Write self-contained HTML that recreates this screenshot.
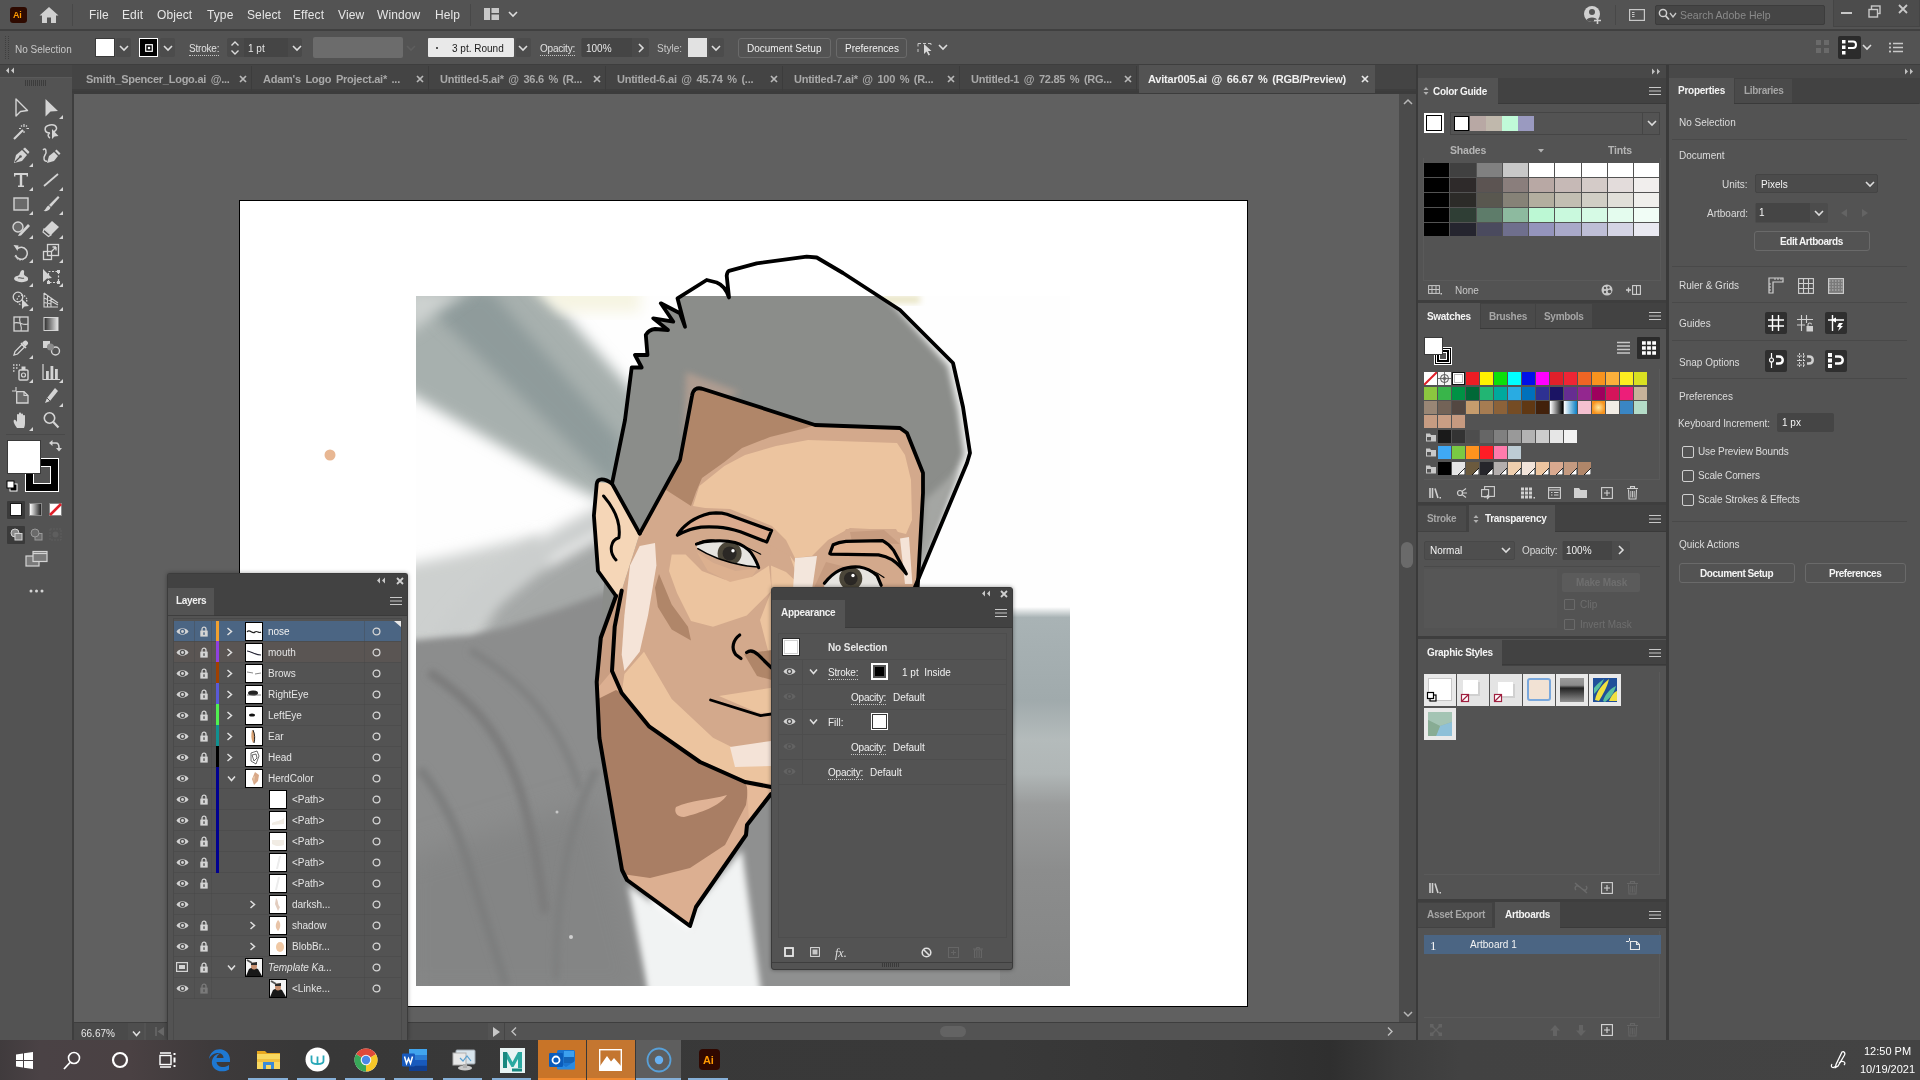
<!DOCTYPE html>
<html><head><meta charset="utf-8"><title>Illustrator</title>
<style>
*{box-sizing:border-box;margin:0;padding:0}
html,body{width:1920px;height:1080px;overflow:hidden;background:#535353;font-family:"Liberation Sans",sans-serif;font-size:11px;color:#dcdcdc}
.a{position:absolute}
.t{position:absolute;white-space:nowrap;line-height:1;will-change:transform}
#menubar{left:0;top:0;width:1920px;height:29px;background:#535353}
#ctrl{left:0;top:31px;width:1920px;height:34px;background:#535353}
#tabs{left:72px;top:65px;width:1344px;height:26px;background:#444}
#tools{left:0;top:65px;width:72px;height:975px;background:#535353}
#canvas{left:74px;top:94px;width:1325px;height:928px;background:#606060;overflow:hidden}
#status{left:74px;top:1022px;width:1342px;height:18px;background:#535353}
#vscroll{left:1399px;top:94px;width:17px;height:928px;background:#4b4b4b}
#dockA{left:1418px;top:65px;width:248px;height:975px;background:#535353}
#dockB{left:1669px;top:65px;width:251px;height:975px;background:#535353}
#taskbar{left:0;top:1040px;width:1920px;height:40px;background:#3c3c3c}
</style></head>
<body>
<div class="a" style="left:0;top:29px;width:1920px;height:2px;background:#404040"></div>
<div id="menubar" class="a"><div class="a" style="left:10px;top:7px;width:17px;height:16px;background:#2e0a00;border-radius:3px"></div><div class="t" style="left:13px;top:9px;font-size:9px;line-height:13px;color:#ff9a00;font-weight:700;letter-spacing:-.2px">Ai</div><svg class="a" style="left:39px;top:6px;" width="20" height="18" viewBox="0 0 20 18"><path d="M10,1 L19.5,9.5 L17,9.5 L17,17 L12,17 L12,11.5 L8,11.5 L8,17 L3,17 L3,9.5 L0.5,9.5 Z" fill="#d0d0d0"/></svg><div class="a" style="left:72px;top:4px;width:1px;height:22px;background:#484848;"></div><div class="t" style="left:89px;top:7px;font-size:12px;line-height:16px;color:#e6e6e6;font-weight:400;letter-spacing:.1px">File</div><div class="t" style="left:122px;top:7px;font-size:12px;line-height:16px;color:#e6e6e6;font-weight:400;letter-spacing:.1px">Edit</div><div class="t" style="left:157px;top:7px;font-size:12px;line-height:16px;color:#e6e6e6;font-weight:400;letter-spacing:.1px">Object</div><div class="t" style="left:207px;top:7px;font-size:12px;line-height:16px;color:#e6e6e6;font-weight:400;letter-spacing:.1px">Type</div><div class="t" style="left:247px;top:7px;font-size:12px;line-height:16px;color:#e6e6e6;font-weight:400;letter-spacing:.1px">Select</div><div class="t" style="left:293px;top:7px;font-size:12px;line-height:16px;color:#e6e6e6;font-weight:400;letter-spacing:.1px">Effect</div><div class="t" style="left:338px;top:7px;font-size:12px;line-height:16px;color:#e6e6e6;font-weight:400;letter-spacing:.1px">View</div><div class="t" style="left:377px;top:7px;font-size:12px;line-height:16px;color:#e6e6e6;font-weight:400;letter-spacing:.1px">Window</div><div class="t" style="left:435px;top:7px;font-size:12px;line-height:16px;color:#e6e6e6;font-weight:400;letter-spacing:.1px">Help</div><div class="a" style="left:470px;top:4px;width:1px;height:22px;background:#484848;"></div><svg class="a" style="left:484px;top:8px;" width="15" height="12" viewBox="0 0 15 12"><rect x="0" y="0" width="6" height="12" fill="#c8c8c8"/><rect x="7.5" y="0" width="7.5" height="5" fill="#c8c8c8"/><rect x="7.5" y="6.5" width="7.5" height="5.5" fill="#c8c8c8"/></svg><svg class="a" style="left:508px;top:10px;" width="10" height="8" viewBox="0 0 10 8"><path d="M1,2 L5,6 L9,2" fill="none" stroke="#dcdcdc" stroke-width="1.6"/></svg><svg class="a" style="left:1583px;top:5px;" width="20" height="20" viewBox="0 0 20 20"><circle cx="9" cy="9" r="8" fill="#d0d0d0"/><circle cx="9" cy="7" r="3" fill="#535353"/><path d="M3.5,15 C4.5,11.5 13.5,11.5 14.5,15 C12,17.5 6,17.5 3.5,15Z" fill="#535353"/><path d="M14.5,12 V19 M11,15.5 H18" stroke="#d0d0d0" stroke-width="1.6"/></svg><div class="a" style="left:1615px;top:5px;width:1px;height:20px;background:#484848;"></div><svg class="a" style="left:1629px;top:9px;" width="16" height="12" viewBox="0 0 16 12"><rect x=".6" y=".6" width="14.8" height="10.8" fill="none" stroke="#c8c8c8" stroke-width="1.2"/><path d="M3,3.5H5.5M3,5.5H5.5M3,7.5H5.5" stroke="#c8c8c8" stroke-width="1"/></svg><div class="a" style="left:1655px;top:5px;width:170px;height:20px;background:#454545;border:1px solid #3c3c3c;border-radius:2px"></div><svg class="a" style="left:1658px;top:8px;" width="12" height="13" viewBox="0 0 12 13"><circle cx="5" cy="5" r="3.6" fill="none" stroke="#d0d0d0" stroke-width="1.5"/><path d="M7.6,7.8 L11,11.5" stroke="#d0d0d0" stroke-width="1.7"/></svg><svg class="a" style="left:1669px;top:12px;" width="8" height="6" viewBox="0 0 8 6"><path d="M1,1 L4,5 L7,1" fill="none" stroke="#c8c8c8" stroke-width="1.3"/></svg><div class="t" style="left:1680px;top:8.2px;font-size:10.5px;line-height:14.5px;color:#8a8a8a;font-weight:400;">Search Adobe Help</div><div class="a" style="left:1833px;top:0px;width:87px;height:27px;background:#4c4c4c;border:1px solid #454545;border-top:none"></div><div class="a" style="left:1841px;top:12px;width:11px;height:2px;background:#c8c8c8;"></div><svg class="a" style="left:1868px;top:5px;" width="14" height="14" viewBox="0 0 14 14"><rect x="3.5" y="1" width="8.5" height="7.5" fill="none" stroke="#c8c8c8" stroke-width="1.4"/><rect x="1" y="4.5" width="8.5" height="7.5" fill="#4c4c4c" stroke="#c8c8c8" stroke-width="1.4"/></svg><svg class="a" style="left:1898px;top:4px;" width="10" height="10" viewBox="0 0 10 10"><path d="M1,1 L9,9 M9,1 L1,9" stroke="#c8c8c8" stroke-width="1.8"/></svg></div>
<div id="ctrl" class="a"><svg class="a" style="left:4px;top:5px;" width="5" height="24" viewBox="0 0 5 24"><path d="M1.5,0V24M4.5,0V24" stroke="#3e3e3e" stroke-width="1" stroke-dasharray="1 1"/></svg><div class="t" style="left:15px;top:11.5px;font-size:10px;line-height:14px;color:#c8c8c8;font-weight:400;">No Selection</div><div class="a" style="left:95px;top:7px;width:20px;height:19px;background:#fff;border:1px solid #3a3a3a"></div><div class="a" style="left:116px;top:7px;width:15px;height:19px;background:#4c4c4c;border-radius:2px"></div><svg class="a" style="left:118.5px;top:12.5px;" width="10" height="8" viewBox="0 0 10 8"><path d="M1,2 L5,6 L9,2" fill="none" stroke="#dcdcdc" stroke-width="1.6"/></svg><div class="a" style="left:139px;top:7px;width:19px;height:19px;background:#000;border:1px solid #fff"></div><svg class="a" style="left:145px;top:13px;" width="8" height="8" viewBox="0 0 8 8"><rect x=".7" y=".7" width="6.6" height="6.6" fill="none" stroke="#fff" stroke-width="1.2"/><rect x="2.8" y="2.8" width="2.4" height="2.4" fill="#fff"/></svg><div class="a" style="left:160px;top:7px;width:15px;height:19px;background:#4c4c4c;border-radius:2px"></div><svg class="a" style="left:162.5px;top:12.5px;" width="10" height="8" viewBox="0 0 10 8"><path d="M1,2 L5,6 L9,2" fill="none" stroke="#dcdcdc" stroke-width="1.6"/></svg><div class="t" style="left:189px;top:11px;font-size:10px;line-height:13px;height:14px;color:#e0e0e0;letter-spacing:-.2px;border-bottom:1px dotted #c4c4c4">Stroke:</div><div class="a" style="left:227px;top:7px;width:75px;height:19px;background:#4a4a4a;border-radius:2px"></div><svg class="a" style="left:230px;top:9px;" width="10" height="16" viewBox="0 0 10 16"><path d="M1.5,5.5 L5,2 L8.5,5.5 M1.5,10.5 L5,14 L8.5,10.5" fill="none" stroke="#dcdcdc" stroke-width="1.4"/></svg><div class="a" style="left:244px;top:7px;width:44px;height:19px;background:#454545;"></div><div class="t" style="left:248px;top:11px;font-size:10px;line-height:14px;color:#e6e6e6;font-weight:400;">1 pt</div><svg class="a" style="left:292px;top:12.5px;" width="10" height="8" viewBox="0 0 10 8"><path d="M1,2 L5,6 L9,2" fill="none" stroke="#dcdcdc" stroke-width="1.6"/></svg><div class="a" style="left:313px;top:6px;width:90px;height:21px;background:#6c6c6c;border-radius:2px"></div><svg class="a" style="left:406px;top:12.5px;" width="10" height="8" viewBox="0 0 10 8"><path d="M1,2 L5,6 L9,2" fill="none" stroke="#5e5e5e" stroke-width="1.6"/></svg><div class="a" style="left:428px;top:7px;width:86px;height:19px;background:#e9e9e9;border-radius:1px"></div><div class="a" style="left:436px;top:15.5px;width:2px;height:2px;background:#222;border-radius:1px"></div><div class="t" style="left:452px;top:11px;font-size:10px;line-height:14px;color:#1a1a1a;font-weight:400;">3 pt. Round</div><div class="a" style="left:516px;top:7px;width:15px;height:19px;background:#4c4c4c;border-radius:2px"></div><svg class="a" style="left:518px;top:12.5px;" width="10" height="8" viewBox="0 0 10 8"><path d="M1,2 L5,6 L9,2" fill="none" stroke="#dcdcdc" stroke-width="1.6"/></svg><div class="t" style="left:540px;top:11px;font-size:10px;line-height:13px;height:14px;color:#e0e0e0;letter-spacing:-.2px;border-bottom:1px dotted #c4c4c4">Opacity:</div><div class="a" style="left:581px;top:7px;width:68px;height:19px;background:#4a4a4a;border-radius:2px"></div><div class="a" style="left:582px;top:7px;width:50px;height:19px;background:#454545;"></div><div class="t" style="left:586px;top:11px;font-size:10px;line-height:14px;color:#e6e6e6;font-weight:400;">100%</div><svg class="a" style="left:637px;top:11.5px;" width="8" height="10" viewBox="0 0 8 10"><path d="M2,1 L6,5 L2,9" fill="none" stroke="#dcdcdc" stroke-width="1.6"/></svg><div class="t" style="left:657px;top:11px;font-size:10px;line-height:14px;color:#c8c8c8;font-weight:400;">Style:</div><div class="a" style="left:688px;top:7px;width:19px;height:19px;background:#e2e2e2;"></div><div class="a" style="left:709px;top:7px;width:15px;height:19px;background:#4c4c4c;border-radius:2px"></div><svg class="a" style="left:711px;top:12.5px;" width="10" height="8" viewBox="0 0 10 8"><path d="M1,2 L5,6 L9,2" fill="none" stroke="#dcdcdc" stroke-width="1.6"/></svg><div class="a" style="left:738px;top:7px;width:93px;height:20px;background:transparent;border:1px solid #6a6a6a;border-radius:3px"></div><div class="t" style="left:747px;top:11px;font-size:10px;line-height:14px;color:#f0f0f0;font-weight:400;">Document Setup</div><div class="a" style="left:836px;top:7px;width:71px;height:20px;background:transparent;border:1px solid #6a6a6a;border-radius:3px"></div><div class="t" style="left:845px;top:11px;font-size:10px;line-height:14px;color:#f0f0f0;font-weight:400;">Preferences</div><svg class="a" style="left:917px;top:9px;" width="16" height="16" viewBox="0 0 16 16"><path d="M1,3.5H4M6,3.5H9M11,3.5H14M1,3.5V6.5M1,9V12M14,3.5V5" stroke="#c8c8c8" stroke-width="1" fill="none"/><path d="M7,4 L7,14 L9.5,11.5 L11.5,15.5 L13,14.8 L11,11 L14.5,11 Z" fill="#d8d8d8"/></svg><svg class="a" style="left:938px;top:12px;" width="10" height="8" viewBox="0 0 10 8"><path d="M1,2 L5,6 L9,2" fill="none" stroke="#dcdcdc" stroke-width="1.6"/></svg><svg class="a" style="left:1816px;top:9px;" width="14" height="14" viewBox="0 0 14 14"><rect x="0" y="0" width="5" height="5" fill="#6a6a6a"/><rect x="8" y="0" width="5" height="5" fill="#6a6a6a"/><rect x="0" y="8" width="5" height="5" fill="#6a6a6a"/><rect x="8" y="8" width="5" height="5" fill="#6a6a6a"/></svg><div class="a" style="left:1838px;top:5px;width:23px;height:23px;background:#2b2b2b;border-radius:2px"></div><svg class="a" style="left:1842px;top:9px;" width="16" height="15" viewBox="0 0 16 15"><rect x="0" y="0" width="3.5" height="3.5" fill="#fff"/><rect x="0" y="5.5" width="3.5" height="3.5" fill="#fff"/><rect x="0" y="11" width="3.5" height="3.5" fill="#fff"/><path d="M6,1.5 H11 C15,1.5 15,8 11,8 H6" fill="none" stroke="#fff" stroke-width="2"/></svg><svg class="a" style="left:1862px;top:12px;" width="10" height="8" viewBox="0 0 10 8"><path d="M1,2 L5,6 L9,2" fill="none" stroke="#dcdcdc" stroke-width="1.6"/></svg><svg class="a" style="left:1889px;top:11px;" width="14" height="11" viewBox="0 0 14 11"><path d="M4,1.5H14M4,5.5H14M4,9.5H14" stroke="#c8c8c8" stroke-width="1.3"/><rect x="0" y=".7" width="2" height="1.8" fill="#c8c8c8"/><rect x="0" y="4.6" width="2" height="1.8" fill="#c8c8c8"/><rect x="0" y="8.6" width="2" height="1.8" fill="#c8c8c8"/></svg></div>
<div class="a" style="left:0;top:64px;width:1920px;height:1px;background:#3e3e3e"></div><div class="a" style="left:72px;top:91px;width:1344px;height:3px;background:#3c3c3c"></div>
<div id="tabs" class="a"><div class="a" style="left:0px;top:24px;width:1344px;height:2px;background:#3e3e3e;"></div><div class="t" style="left:14px;top:7px;font-size:11px;line-height:15px;color:#a9a9a9;font-weight:700;letter-spacing:-.25px;word-spacing:1.8px">Smith_Spencer_Logo.ai @...</div><svg class="a" style="left:167px;top:10px;" width="8" height="8" viewBox="0 0 8 8"><path d="M1,1 L7,7 M7,1 L1,7" stroke="#b8b8b8" stroke-width="1.7"/></svg><div class="a" style="left:179px;top:1px;width:1px;height:25px;background:#3c3c3c;"></div><div class="t" style="left:191px;top:7px;font-size:11px;line-height:15px;color:#a9a9a9;font-weight:700;letter-spacing:-.25px;word-spacing:1.8px">Adam's Logo Project.ai* ...</div><svg class="a" style="left:344px;top:10px;" width="8" height="8" viewBox="0 0 8 8"><path d="M1,1 L7,7 M7,1 L1,7" stroke="#b8b8b8" stroke-width="1.7"/></svg><div class="a" style="left:356px;top:1px;width:1px;height:25px;background:#3c3c3c;"></div><div class="t" style="left:368px;top:7px;font-size:11px;line-height:15px;color:#a9a9a9;font-weight:700;letter-spacing:-.25px;word-spacing:1.8px">Untitled-5.ai* @ 36.6 % (R...</div><svg class="a" style="left:521px;top:10px;" width="8" height="8" viewBox="0 0 8 8"><path d="M1,1 L7,7 M7,1 L1,7" stroke="#b8b8b8" stroke-width="1.7"/></svg><div class="a" style="left:533px;top:1px;width:1px;height:25px;background:#3c3c3c;"></div><div class="t" style="left:545px;top:7px;font-size:11px;line-height:15px;color:#a9a9a9;font-weight:700;letter-spacing:-.25px;word-spacing:1.8px">Untitled-6.ai @ 45.74 % (...</div><svg class="a" style="left:698px;top:10px;" width="8" height="8" viewBox="0 0 8 8"><path d="M1,1 L7,7 M7,1 L1,7" stroke="#b8b8b8" stroke-width="1.7"/></svg><div class="a" style="left:710px;top:1px;width:1px;height:25px;background:#3c3c3c;"></div><div class="t" style="left:722px;top:7px;font-size:11px;line-height:15px;color:#a9a9a9;font-weight:700;letter-spacing:-.25px;word-spacing:1.8px">Untitled-7.ai* @ 100 % (R...</div><svg class="a" style="left:875px;top:10px;" width="8" height="8" viewBox="0 0 8 8"><path d="M1,1 L7,7 M7,1 L1,7" stroke="#b8b8b8" stroke-width="1.7"/></svg><div class="a" style="left:887px;top:1px;width:1px;height:25px;background:#3c3c3c;"></div><div class="t" style="left:899px;top:7px;font-size:11px;line-height:15px;color:#a9a9a9;font-weight:700;letter-spacing:-.25px;word-spacing:1.8px">Untitled-1 @ 72.85 % (RG...</div><svg class="a" style="left:1052px;top:10px;" width="8" height="8" viewBox="0 0 8 8"><path d="M1,1 L7,7 M7,1 L1,7" stroke="#b8b8b8" stroke-width="1.7"/></svg><div class="a" style="left:1064px;top:1px;width:1px;height:25px;background:#3c3c3c;"></div><div class="a" style="left:1067px;top:0px;width:236px;height:28px;background:#535353;"></div><div class="t" style="left:1076px;top:7px;font-size:11px;line-height:15px;color:#f0f0f0;font-weight:700;letter-spacing:-.2px;word-spacing:1.8px">Avitar005.ai @ 66.67 % (RGB/Preview)</div><svg class="a" style="left:1289px;top:10px;" width="8" height="8" viewBox="0 0 8 8"><path d="M1,1 L7,7 M7,1 L1,7" stroke="#e8e8e8" stroke-width="1.7"/></svg></div>
<div id="tools" class="a"><div class="a" style="left:0px;top:0px;width:72px;height:12px;background:#474747;"></div><svg class="a" style="left:5px;top:2px;" width="10" height="7" viewBox="0 0 10 7"><path d="M4,0.5 L1,3.5 L4,6.5Z M9,0.5 L6,3.5 L9,6.5Z" fill="#c8c8c8"/></svg><div class="a" style="left:0px;top:12px;width:72px;height:1px;background:#5a5a5a;"></div><svg class="a" style="left:25px;top:15px;" width="22" height="6" viewBox="0 0 22 6"><path d="M0.5,0V6M2.5,0V6M4.5,0V6M6.5,0V6M8.5,0V6M10.5,0V6M12.5,0V6M14.5,0V6M16.5,0V6M18.5,0V6M20.5,0V6" stroke="#3c3c3c" stroke-width="1"/></svg><svg width="0" height="0" class="a"><defs><linearGradient id="tg"><stop offset="0" stop-color="#2a2a2a"/><stop offset="1" stop-color="#e8e8e8"/></linearGradient></defs></svg><div class="a" style="left:6px;top:369px;width:59px;height:1px;background:#494949;"></div><svg class="a" style="left:11px;top:33px;" width="20" height="20" viewBox="0 0 20 20"><path d="M5,1 L5,18 L9.5,13.5 L16.5,12.5 Z" fill="none" stroke="#d4d4d4" stroke-width="1.4" stroke-linejoin="round"/></svg><svg class="a" style="left:41px;top:33px;" width="20" height="20" viewBox="0 0 20 20"><path d="M4.5,1 L4.5,18.5 L9.5,13.5 L17,13 Z" fill="#d4d4d4"/></svg><svg class="a" style="left:59px;top:50px;" width="4" height="4" viewBox="0 0 4 4"><path d="M4,0V4H0Z" fill="#d4d4d4"/></svg><svg class="a" style="left:11px;top:57px;" width="20" height="20" viewBox="0 0 20 20"><path d="M3,17 L12,8" stroke="#d4d4d4" stroke-width="2.2"/><path d="M13,2V5M13,9V11M10,6.5H8M18,6.5H15.5M10,3.5L11,4.5M16,3.5L15,4.5" stroke="#d4d4d4" stroke-width="1.2"/></svg><svg class="a" style="left:41px;top:57px;" width="20" height="20" viewBox="0 0 20 20"><path d="M9,11 C3,11 2,4 9,3 C16,2 18,8 12,10 M9,11 C6,12 7,15 9,16" fill="none" stroke="#d4d4d4" stroke-width="1.5"/><path d="M11,7 L11,17 L13.5,14.5 L17.5,14 Z" fill="#d4d4d4"/></svg><svg class="a" style="left:11px;top:81px;" width="20" height="20" viewBox="0 0 20 20"><path d="M3,17 L5,9 L11,4 L16,9 L11,15 Z" fill="#d4d4d4"/><path d="M12,3 L14,1.5 L18.5,6 L17,8Z" fill="#d4d4d4"/><path d="M4,16 L9,11" stroke="#535353" stroke-width="1.2"/><circle cx="9.5" cy="10.5" r="1.3" fill="#535353"/></svg><svg class="a" style="left:41px;top:81px;" width="20" height="20" viewBox="0 0 20 20"><path d="M6,17 L8,10 L13,6 L17,10 L13,15 Z" fill="#d4d4d4"/><path d="M14,5 L15.5,3.5 L19.5,7.5 L18,9Z" fill="#d4d4d4"/><path d="M2,4 C5,1 6,6 4,9 C2,12 3,16 6,15" fill="none" stroke="#d4d4d4" stroke-width="1.5"/></svg><svg class="a" style="left:29px;top:98px;" width="4" height="4" viewBox="0 0 4 4"><path d="M4,0V4H0Z" fill="#d4d4d4"/></svg><svg class="a" style="left:11px;top:105px;" width="20" height="20" viewBox="0 0 20 20"><path d="M3,3 H17 V6.5 H15.6 V5 H11.2 V15.5 H13 V17 H7 V15.5 H8.8 V5 H4.4 V6.5 H3 Z" fill="#d4d4d4"/></svg><svg class="a" style="left:41px;top:105px;" width="20" height="20" viewBox="0 0 20 20"><path d="M3,16 L17,4" stroke="#d4d4d4" stroke-width="1.8"/></svg><svg class="a" style="left:29px;top:122px;" width="4" height="4" viewBox="0 0 4 4"><path d="M4,0V4H0Z" fill="#d4d4d4"/></svg><svg class="a" style="left:59px;top:122px;" width="4" height="4" viewBox="0 0 4 4"><path d="M4,0V4H0Z" fill="#d4d4d4"/></svg><svg class="a" style="left:11px;top:129px;" width="20" height="20" viewBox="0 0 20 20"><rect x="3" y="4" width="14" height="12" fill="#6a6a6a" stroke="#d4d4d4" stroke-width="1.4"/></svg><svg class="a" style="left:41px;top:129px;" width="20" height="20" viewBox="0 0 20 20"><path d="M17,2 L18.5,3.5 L10,13 L8,11 Z" fill="#d4d4d4"/><path d="M7.5,11.5 L9.5,13.5 C8.5,17 5,17.5 2.5,17 C5,16 5,12.5 7.5,11.5Z" fill="#d4d4d4"/></svg><svg class="a" style="left:29px;top:146px;" width="4" height="4" viewBox="0 0 4 4"><path d="M4,0V4H0Z" fill="#d4d4d4"/></svg><svg class="a" style="left:59px;top:146px;" width="4" height="4" viewBox="0 0 4 4"><path d="M4,0V4H0Z" fill="#d4d4d4"/></svg><svg class="a" style="left:11px;top:153px;" width="20" height="20" viewBox="0 0 20 20"><circle cx="7" cy="9" r="5" fill="#6a6a6a" stroke="#d4d4d4" stroke-width="1.4"/><path d="M8,16 L17,6 L19,8 L10,17.5 L7,18Z" fill="#d4d4d4"/></svg><svg class="a" style="left:41px;top:153px;" width="20" height="20" viewBox="0 0 20 20"><path d="M11,3 L18,9 L10,17 L3,11 Z" fill="#d4d4d4"/><path d="M3,11 L10,17 L7.5,18.5 L2,14 Z" fill="#535353" stroke="#d4d4d4" stroke-width="1.2"/></svg><svg class="a" style="left:29px;top:170px;" width="4" height="4" viewBox="0 0 4 4"><path d="M4,0V4H0Z" fill="#d4d4d4"/></svg><svg class="a" style="left:59px;top:170px;" width="4" height="4" viewBox="0 0 4 4"><path d="M4,0V4H0Z" fill="#d4d4d4"/></svg><svg class="a" style="left:11px;top:177px;" width="20" height="20" viewBox="0 0 20 20"><path d="M6,7 A6,6 0 1 1 4.5,13" fill="none" stroke="#d4d4d4" stroke-width="1.5"/><path d="M2.5,3 L7.5,3.5 L6.5,9 Z" fill="#d4d4d4"/><path d="M4,14 A6,6 0 0 0 15,15" fill="none" stroke="#d4d4d4" stroke-width="1" stroke-dasharray="1.5 1.5"/></svg><svg class="a" style="left:41px;top:177px;" width="20" height="20" viewBox="0 0 20 20"><rect x="2.5" y="9.5" width="8" height="8" fill="none" stroke="#d4d4d4" stroke-width="1.3"/><rect x="6.5" y="2.5" width="11" height="11" fill="none" stroke="#d4d4d4" stroke-width="1.3"/><path d="M10,10 L15,5 M15,5 H11.5 M15,5 V8.5" stroke="#d4d4d4" stroke-width="1.3" fill="none"/></svg><svg class="a" style="left:29px;top:194px;" width="4" height="4" viewBox="0 0 4 4"><path d="M4,0V4H0Z" fill="#d4d4d4"/></svg><svg class="a" style="left:59px;top:194px;" width="4" height="4" viewBox="0 0 4 4"><path d="M4,0V4H0Z" fill="#d4d4d4"/></svg><svg class="a" style="left:11px;top:201px;" width="20" height="20" viewBox="0 0 20 20"><path d="M3,13 C4,8 8,12 9,7 C10,3 14,3 13,7 C12,11 18,9 17,14 C15,17 5,17 3,13Z" fill="#d4d4d4"/><path d="M7,12 C9,11 11,13 13,12" stroke="#535353" stroke-width="1.2" fill="none"/></svg><svg class="a" style="left:41px;top:201px;" width="20" height="20" viewBox="0 0 20 20"><path d="M2,3 L2,16 L6,12.5 L11,12 Z" fill="#d4d4d4"/><rect x="7.5" y="5.5" width="10" height="11" fill="none" stroke="#d4d4d4" stroke-width="1.2" stroke-dasharray="2 1.5"/><rect x="16" y="4" width="3" height="3" fill="#d4d4d4"/><rect x="16" y="15" width="3" height="3" fill="#d4d4d4"/><rect x="6" y="15" width="3" height="3" fill="#d4d4d4"/></svg><svg class="a" style="left:29px;top:218px;" width="4" height="4" viewBox="0 0 4 4"><path d="M4,0V4H0Z" fill="#d4d4d4"/></svg><svg class="a" style="left:59px;top:218px;" width="4" height="4" viewBox="0 0 4 4"><path d="M4,0V4H0Z" fill="#d4d4d4"/></svg><svg class="a" style="left:11px;top:225px;" width="20" height="20" viewBox="0 0 20 20"><circle cx="7" cy="7" r="4.8" fill="none" stroke="#d4d4d4" stroke-width="1.3"/><circle cx="11" cy="10" r="4.8" fill="none" stroke="#d4d4d4" stroke-width="1.3" stroke-dasharray="1.5 1.5"/><path d="M11,9 L11,19 L13.5,16.5 L18,16 Z" fill="#d4d4d4"/></svg><svg class="a" style="left:41px;top:225px;" width="20" height="20" viewBox="0 0 20 20"><path d="M3,3 L3,17 L17,17 M3,3 L10,8 L10,17 M3,8 L10,11 M3,12.5 L10,14 M6.5,5.5 V17 M10,8 L17,13 M10,11 L17,15" fill="none" stroke="#d4d4d4" stroke-width="1.1"/></svg><svg class="a" style="left:29px;top:242px;" width="4" height="4" viewBox="0 0 4 4"><path d="M4,0V4H0Z" fill="#d4d4d4"/></svg><svg class="a" style="left:59px;top:242px;" width="4" height="4" viewBox="0 0 4 4"><path d="M4,0V4H0Z" fill="#d4d4d4"/></svg><svg class="a" style="left:11px;top:249px;" width="20" height="20" viewBox="0 0 20 20"><rect x="3" y="3" width="14" height="14" fill="none" stroke="#d4d4d4" stroke-width="1.3"/><path d="M3,9 C8,7 12,12 17,10 M9,3 C7,8 12,12 10,17" fill="none" stroke="#d4d4d4" stroke-width="1.1"/></svg><svg class="a" style="left:41px;top:249px;" width="20" height="20" viewBox="0 0 20 20"><rect x="3" y="3.5" width="14" height="13" fill="url(#tg)" stroke="#d4d4d4" stroke-width="1"/></svg><svg class="a" style="left:11px;top:273px;" width="20" height="20" viewBox="0 0 20 20"><path d="M3,17 L4,13.5 L11,6.5 L13.5,9 L6.5,16 Z" fill="none" stroke="#d4d4d4" stroke-width="1.3"/><path d="M11,5 L13,3 C15,1 18.5,4.5 16.5,6.5 L14.5,8.5Z" fill="#d4d4d4"/><path d="M10,5 L15,10" stroke="#d4d4d4" stroke-width="1.6"/></svg><svg class="a" style="left:41px;top:273px;" width="20" height="20" viewBox="0 0 20 20"><rect x="2" y="3" width="7" height="7" fill="#d4d4d4"/><circle cx="14.5" cy="13" r="4" fill="none" stroke="#d4d4d4" stroke-width="1.4"/><circle cx="9.5" cy="9" r="3.5" fill="#8a8a8a"/></svg><svg class="a" style="left:29px;top:290px;" width="4" height="4" viewBox="0 0 4 4"><path d="M4,0V4H0Z" fill="#d4d4d4"/></svg><svg class="a" style="left:11px;top:297px;" width="20" height="20" viewBox="0 0 20 20"><rect x="8" y="8" width="9" height="10" rx="1" fill="none" stroke="#d4d4d4" stroke-width="1.4"/><rect x="10.5" y="4.5" width="4" height="3.5" fill="#d4d4d4"/><circle cx="12.5" cy="13" r="2" fill="none" stroke="#d4d4d4" stroke-width="1.2"/><path d="M2,3H3.5M5,3H6.5M2,6H3.5M5,6H6.5M2,9H3.5M8,3H9" stroke="#d4d4d4" stroke-width="1.3"/></svg><svg class="a" style="left:41px;top:297px;" width="20" height="20" viewBox="0 0 20 20"><path d="M2,2V17.5H19" fill="none" stroke="#d4d4d4" stroke-width="1.2"/><rect x="5" y="9" width="2.8" height="8" fill="#d4d4d4"/><rect x="9.5" y="4" width="2.8" height="13" fill="#d4d4d4"/><rect x="14" y="7" width="2.8" height="10" fill="#d4d4d4"/></svg><svg class="a" style="left:29px;top:314px;" width="4" height="4" viewBox="0 0 4 4"><path d="M4,0V4H0Z" fill="#d4d4d4"/></svg><svg class="a" style="left:59px;top:314px;" width="4" height="4" viewBox="0 0 4 4"><path d="M4,0V4H0Z" fill="#d4d4d4"/></svg><svg class="a" style="left:11px;top:321px;" width="20" height="20" viewBox="0 0 20 20"><path d="M5,1V5M1,5H5" stroke="#d4d4d4" stroke-width="1.1"/><path d="M5.7,5.7 H13 L17,9.5 V17 H5.7Z" fill="#6a6a6a" stroke="#d4d4d4" stroke-width="1.3"/><path d="M13,5.7V9.5H17" fill="none" stroke="#d4d4d4" stroke-width="1.1"/></svg><svg class="a" style="left:41px;top:321px;" width="20" height="20" viewBox="0 0 20 20"><path d="M4,17 L6,12 L14,2 L17,5 L9,15 Z" fill="#d4d4d4"/><path d="M6,12 L9,15" stroke="#535353" stroke-width="1"/></svg><svg class="a" style="left:59px;top:338px;" width="4" height="4" viewBox="0 0 4 4"><path d="M4,0V4H0Z" fill="#d4d4d4"/></svg><svg class="a" style="left:11px;top:345px;" width="20" height="20" viewBox="0 0 20 20"><path d="M6,18 C3,14 2,11 3,10 C4,9 5.5,11 6,12 V5 C6,3.5 8,3.5 8,5 V3.5 C8,2 10,2 10,3.5 V4.5 C10,3 12,3 12,4.5 V6 C12,4.8 14,4.8 14,6 V13 C14,15 13.5,17 13,18Z" fill="#d4d4d4"/></svg><svg class="a" style="left:41px;top:345px;" width="20" height="20" viewBox="0 0 20 20"><circle cx="8.5" cy="8" r="5.2" fill="none" stroke="#d4d4d4" stroke-width="1.6"/><path d="M12.3,12 L17.5,17.5" stroke="#d4d4d4" stroke-width="2.2"/></svg><svg class="a" style="left:29px;top:362px;" width="4" height="4" viewBox="0 0 4 4"><path d="M4,0V4H0Z" fill="#d4d4d4"/></svg><div class="a" style="left:25px;top:393px;width:34px;height:34px;background:#000;border:1px solid #fff"></div><div class="a" style="left:33px;top:401px;width:18px;height:18px;background:#535353;border:1px solid #fff"></div><div class="a" style="left:7px;top:375px;width:34px;height:34px;background:#fff;border:1px solid #3a3a3a"></div><svg class="a" style="left:49px;top:374px;" width="13" height="13" viewBox="0 0 13 13"><path d="M2,4 H7 C9.5,4 10,6 10,9" fill="none" stroke="#d4d4d4" stroke-width="1.6"/><path d="M0,4 L3.5,1 V7Z M10,12.5 L7,9 H13Z" fill="#d4d4d4"/></svg><svg class="a" style="left:6px;top:415px;" width="12" height="12" viewBox="0 0 12 12"><rect x="4" y="4" width="7" height="7" fill="#000" stroke="#fff" stroke-width="1"/><rect x="1" y="1" width="7" height="7" fill="#fff" stroke="#000" stroke-width="1"/></svg><div class="a" style="left:7px;top:436px;width:18px;height:18px;background:#3a3a3a;border-radius:1px"></div><div class="a" style="left:10px;top:438px;width:12px;height:13px;background:#fff;border:1px solid #1a1a1a"></div><div class="a" style="left:29px;top:438px;width:13px;height:13px;background:linear-gradient(90deg,#fff,#222);border:1px solid #888"></div><svg class="a" style="left:49px;top:438px;" width="13" height="13" viewBox="0 0 13 13"><rect x=".5" y=".5" width="12" height="12" fill="#fff" stroke="#888"/><path d="M1,12 L12,1" stroke="#e0202a" stroke-width="2.6"/></svg><div class="a" style="left:7px;top:461px;width:18px;height:18px;background:#3a3a3a;border-radius:1px"></div><svg class="a" style="left:10px;top:463px;" width="13" height="13" viewBox="0 0 13 13"><circle cx="5" cy="5" r="4" fill="#8a8a8a" stroke="#d4d4d4" stroke-width="1"/><rect x="5" y="5.5" width="7" height="6.5" fill="#8a8a8a" stroke="#d4d4d4" stroke-width="1"/></svg><svg class="a" style="left:30px;top:463px;" width="13" height="13" viewBox="0 0 13 13"><rect x="5" y="5.5" width="7" height="6.5" fill="#6a6a6a" stroke="#9a9a9a" stroke-width="1"/><circle cx="5" cy="5" r="4" fill="#6a6a6a" stroke="#9a9a9a" stroke-width="1"/></svg><svg class="a" style="left:49px;top:463px;" width="13" height="13" viewBox="0 0 13 13"><rect x="1" y="1" width="11" height="11" fill="none" stroke="#5e5e5e" stroke-dasharray="2 1"/><circle cx="6.5" cy="6.5" r="3" fill="#5e5e5e"/></svg><svg class="a" style="left:25px;top:485px;" width="24" height="18" viewBox="0 0 24 18"><rect x="1" y="6" width="13" height="10" fill="#7a7a7a" stroke="#d4d4d4" stroke-width="1.2"/><rect x="8" y="1.5" width="14" height="10" fill="#7a7a7a" stroke="#d4d4d4" stroke-width="1.2"/><path d="M8,3.5H22" stroke="#d4d4d4" stroke-width="1.2"/></svg><svg class="a" style="left:29px;top:524px;" width="15" height="4" viewBox="0 0 15 4"><circle cx="2" cy="2" r="1.5" fill="#d4d4d4"/><circle cx="7.5" cy="2" r="1.5" fill="#d4d4d4"/><circle cx="13" cy="2" r="1.5" fill="#d4d4d4"/></svg></div>
<div class="a" style="left:72px;top:93px;width:2px;height:947px;background:#3e3e3e"></div>
<div id="canvas" class="a"><svg class="a" style="left:0;top:0" width="1325" height="928" viewBox="74 94 1325 928">
<defs>
<clipPath id="cpPhoto"><rect x="416" y="296" width="654" height="690"/></clipPath>
<filter id="b20" x="-30%" y="-30%" width="160%" height="160%"><feGaussianBlur stdDeviation="14"/></filter>
<filter id="b8" x="-30%" y="-30%" width="160%" height="160%"><feGaussianBlur stdDeviation="7"/></filter>
<filter id="b3" x="-30%" y="-30%" width="160%" height="160%"><feGaussianBlur stdDeviation="3"/></filter>
<clipPath id="cpHair"><path d="M611,484 L625,420 L631.7,367.5 L641.7,367.5 L635,355 L647.5,355 L645.8,335 L655,329 L668,330 L653.3,318.3 L673.3,321.7 L660.8,303.3 L680,313.3 L685,326.7 L677.5,298.3 L706.7,280 L716.7,282.5 L729,297.5 L726.7,275.8 L729,270.8 L756.7,263.3 L806.7,256.7 L816.7,257.5 L843,273 L900,310 L953,363 L963,407 L970,453 L967,463 L915,587 L900,640 L600,640 Z"/></clipPath>
<clipPath id="cpFace"><path d="M700,389 L815,425 L900,428 L907,433 L923,473 L923,493 L917,600 L900,640 L800,640 L800,800 L770,795 L747,825 L746,835 L696,907 L690,926 L627,880 L622,870 L599.4,737.8 L596.7,682 L600.8,637.8 L614.7,597.5 L621.7,590.6 L639.7,533.6 L680,460 L692,395 Z"/></clipPath>
<linearGradient id="gRight" gradientUnits="userSpaceOnUse" x1="0" y1="600" x2="0" y2="986"><stop offset="0" stop-color="#fefefe"/><stop offset=".018" stop-color="#fefefe"/><stop offset=".045" stop-color="#a9b3b5"/><stop offset=".26" stop-color="#a0aaac"/><stop offset=".36" stop-color="#b4bbbb"/><stop offset=".45" stop-color="#b0b6b6"/><stop offset=".53" stop-color="#9a9c9c"/><stop offset=".7" stop-color="#8c8d8d"/><stop offset="1" stop-color="#848585"/></linearGradient></defs>
<!-- artboard -->
<rect x="239.5" y="200.5" width="1008" height="806" fill="#fff" stroke="#000" stroke-width="1"/>
<circle cx="330" cy="455" r="5.5" fill="#e8b793"/>
<!-- photo -->
<g clip-path="url(#cpPhoto)">
<rect x="416" y="296" width="654" height="690" fill="#fefefe"/>
<!-- top-left diagonal pillar -->
<path d="M400,280 L535,280 L640,400 L640,520 L560,480 L400,388 Z" fill="#a7b0ae" filter="url(#b8)"/>
<path d="M420,300 L490,290 L620,440 L620,492 Z" fill="#8f9b9b" filter="url(#b8)"/>
<path d="M406,290 L470,290 L406,335 Z" fill="#cdd2d0" filter="url(#b8)"/>
<path d="M530,286 L640,286 L640,312 L560,312 Z" fill="#f6f4e2" filter="url(#b8)"/>
<!-- seat -->
<path d="M400,566 L450,556 L540,535 L560,600 L470,645 L400,650 Z" fill="#cdd0cf" filter="url(#b8)"/>
<path d="M470,655 L498,605 L540,570 L615,528 L615,610 L506,640 Z" fill="#a5a8a7" filter="url(#b8)"/>
<path d="M436,655 C468,600 522,556 615,512" fill="none" stroke="#cbcecd" stroke-width="24" filter="url(#b8)"/>
<!-- jacket -->
<path d="M400,641 L470,635 L506,627 L560,609 L598,595 L650,576 L650,1000 L400,1000 Z" fill="#8c8d8d" filter="url(#b3)"/>
<path d="M400,860 L600,800 L650,1000 L400,1000 Z" fill="#848585" filter="url(#b20)"/>
<path d="M429,672 C470,700 500,730 520,790 C535,840 540,880 545,913" fill="none" stroke="#7b7c7c" stroke-width="9" filter="url(#b3)"/>
<path d="M420,769 C445,800 460,835 470,870 C482,910 495,950 506,985" fill="none" stroke="#7d7e7e" stroke-width="9" filter="url(#b3)"/>
<path d="M470,650 C520,680 560,720 580,790" fill="none" stroke="#808181" stroke-width="7" filter="url(#b3)"/>
<path d="M556,980 C556,900 566,830 596,770" fill="none" stroke="#7e7f7f" stroke-width="7" filter="url(#b3)"/>
<circle cx="557" cy="812" r="1.5" fill="#c8c8c8"/><circle cx="571" cy="937" r="2" fill="#d0d0d0"/>
<!-- right of neck -->
<rect x="700" y="780" width="400" height="230" fill="#8f9090" filter="url(#b8)"/>
<!-- shirt -->
<path d="M628,885 L690,930 L700,900 L742,850 L762,1000 L650,1000 Z" fill="#f1f3f3" filter="url(#b3)"/>
<!-- right side -->
<rect x="1000" y="600" width="90" height="400" fill="url(#gRight)"/>
<rect x="880" y="296" width="40" height="7" fill="#e6e2bd" filter="url(#b3)"/>
<!-- hair -->
<g clip-path="url(#cpHair)"><rect x="590" y="296" width="390" height="320" fill="#8b8d8a"/>
<path d="M880,290 L948,366 L958,410 L964,454 L912,585 L990,600 L990,290Z" fill="#f0f1f0" filter="url(#b3)"/><path d="M925,500 L958,470 L918,585 Z" fill="#a4a6a3" filter="url(#b3)"/>
</g>
</g>
<!-- FACE -->
<path d="M686,372 L740,392 L700,410 L684,440 Z" fill="#b7a093" filter="url(#b3)" opacity=".8"/>
<g clip-path="url(#cpFace)">
<rect x="590" y="380" width="350" height="560" fill="#d3a98c"/>
<!-- temple dark -->
<path d="M690,383 L700,387 L815,425 L806,428 L770,437 L742,448 L724.4,462 L702,478 L696,492 L691,506 L663,488 L680,460 Z" fill="#b08669"/>
<!-- forehead light -->
<path d="M808,440 L897,443 L905,455 L911,480 L912,520 L906,534 L890,530 L850,528 L828,540 L812,556 L795,558 L786,540 L772,526 L730,509 L705,508 L693,506 L699.4,486 L724.4,466 L745,455 L776,446 Z" fill="#ecc49f"/>
<!-- right brow shadow -->
<path d="M846,529 L896,529 L912,556 L917,585 L900,590 L826,562 Z" fill="#d3a98c"/>
<path d="M850,532 L884,530 L900,544 L852,542Z" fill="#c79c80"/>
<!-- under left eye light -->
<path d="M671.7,554.4 L685.6,554.4 L702,571 L724.4,579.4 L752,576.7 L769,565.6 L771.7,590.6 L746.7,615.6 L713,626.7 L691,621 L677,593 L669,571 Z" fill="#ecc49f"/>
<path d="M696.7,551.7 L707.8,571 L730,582 L752,576.7 L757.8,568 L735.6,571 L713,562.8 Z" fill="#dcb08f"/>
<!-- nose bridge light -->
<path d="M771,566 L790,556 L812,585 L806,640 L771,662 L760,620 L771.7,590 Z" fill="#ecc49f"/>
<path d="M770,545 L790,556 L800,585 L786,572 L772,566Z" fill="#d3a98c"/>
<path d="M826,562 L850,568 L832,590 L812,592Z" fill="#c79c80"/>
<!-- cheek dark -->
<path d="M659,574 L671.7,604.4 L688,626.7 L691,640.6 L671.7,629.4 L657.8,607 L655,587.8 Z" fill="#b08669"/>
<!-- band between outline & jawline -->
<path d="M621.7,590.6 L614.7,626.7 L612,671 L621.7,693 L600,700 L596,682 L600.8,637.8 L614.7,597.5 Z" fill="#c99e82"/>
<!-- highlights -->
<path d="M639.7,546 L655,543 L656.4,565.6 L648,615.6 L639.7,651.7 L624.4,671 L621.7,654.4 L624.4,615.6 L630,565.6 Z" fill="#f5e4d8"/>
<path d="M795,558 L817,556 L812,590 L793,590 Z" fill="#f3e6dc"/>
<path d="M900,538.5 L909,537 L912.4,584 L905,584 Z" fill="#f4e3d7"/>
<!-- nose shadow -->
<path d="M744,654 L771.7,650 L771.7,680 L757,676Z" fill="#b08669"/>
<!-- mouth area light -->
<path d="M719,696 L771.7,687.8 L771.7,712.8 L757.8,712.8Z" fill="#ecc49f"/>
<!-- jaw highlight band -->
<path d="M624.4,674 L644,651.7 L671.7,699 L713,737.8 L735.6,749 L771,752 L771,784 L745,780 L700,760 L649.4,726.7 L621.7,693 Z" fill="#ecc49f"/>
<path d="M730,747 L771,741 L771,766 L735,767 Z" fill="#f4e3d7"/>
<!-- neck -->
<path d="M596,690 L612,671 L621.7,693 L649.4,726.7 L700,762 L745,782 L771,786 L771,800 L747,825 L746,835 L696,907 L690,926 L627,880 L622,870 L599.4,737.8 Z" fill="#dcaf91"/>
<path d="M596,700 L616,690 L621.7,693 L649.4,726.7 L700,762 L745,782 L748,790 L746,805 L725,845 L690,868 L650,878 L622,874 L599.4,737.8 Z" fill="#a97e64"/>
<path d="M747,786 L771,788 L771,797 L749,822 Z" fill="#e6ba99"/>
<path d="M676,807 C690,800 710,800 727,795 C720,806 700,813 684,817 C676,817 674,811 676,807Z" fill="#e0b396"/>
</g>
<!-- ear -->
<path d="M596.7,482 L612,483.6 L639.7,533.6 L621.7,590.6 L616,596 L598,571 L593.9,515.6 Z" fill="#f5d6b7"/>
<!-- outlines -->
<g fill="none" stroke="#000" stroke-width="3.8" stroke-linejoin="round" stroke-linecap="round">
<path d="M612,483.6 L625,420 L631.7,367.5 L641.7,367.5 L635,355 L647.5,355 L645.8,335 C648,331 651,329.5 655,329 L668,330 L653.3,318.3 L673.3,321.7 L660.8,303.3 L680,313.3 L685,326.7 L677.5,298.3 L706.7,280 L716.7,282.5 C723,285 727,291 729,297.5 L726.7,275.8 C727,273 728,271.5 729,270.8 L756.7,263.3 L806.7,256.7 L816.7,257.5 L843,273 L900,310 L953,363 L963,407 L970,453 L967,463 L915,587 L912,600"/>
<path d="M639.7,533.6 L680,460 L692,396 C693,389 697,387 703,389 L815,425 L900,428 L907,433 L923,473 L923,493 L917,600"/>
<path d="M612,483.6 L639.7,533.6"/>
<path d="M612,483.6 C604,478 597.5,478 596.7,484 L593.9,515.6 L598,571 L616,596"/>
<path d="M603.6,496 C614,508 621,523 618.9,537.8 C611,540 608,551 616,560" stroke-width="3"/>
<path d="M616,596 L600.8,637.8 L596.7,682 L599.4,737.8 L622,870 L627,880 L690,926 L696,907 L746,835 L747,825 L771,794" stroke-width="4"/>
<path d="M621.7,590.6 L614.7,626.7 L612,671 L621.7,693 L649.4,726.7 L700,762 L745,782 L771,787" stroke-width="4"/>
<!-- brows -->
<path d="M677.4,535.2 C680,530 684,526.5 687.6,523.7 C692,520 698,517 703.9,514.9 C708,513.5 712,513 716,512.9 C720,512.9 724,513.4 726.9,514.2 L771.6,530.5 L766.8,542 L740.4,531.8 C732,529 724,527.5 717.4,527.1 C712,526.8 706,526.8 701.1,527.1 C696,527.8 691,529 687.6,530.5 C684,531.8 680,533.5 677.4,535.2 Z" fill="#dcab8e" stroke-width="3.2"/>
<path d="M829.8,553.5 L833.2,544.7 C837,542.8 841,541.8 846,541.3 L882.6,540.6 C887,543 890.5,546 893.4,550.1 L906.3,573.8 C902,568 897,563 892,559.6 C888,557.3 883,555.6 878.5,554.8 L831.1,554.2 Z" fill="#e2b493" stroke-width="3.2"/>
<!-- nose & mouth -->
<path d="M739.7,635 C733,640 731,648 735.6,654.4 L741,658.6" stroke-width="3.2"/>
<path d="M746.7,652.5 C750,650 754,651 757.8,654.4 L771.7,668" stroke-width="3.4"/>
<path d="M710.6,700 L760.6,715.6 L771.7,714" stroke-width="2.8"/>
</g>
<!-- eyes -->
<clipPath id="cpEyeL"><path d="M696.4,545 C703,542 709,541 714.7,541.3 C722,541 729,541.5 735,542.7 C741,544.5 747,548 751.2,552.8 L758.7,567.7 C751,567 743,565.5 735,563.6 C729,562 723,560.3 717.4,558.2 C710,555.5 703,552 697.8,548.7 Z"/></clipPath>
<g clip-path="url(#cpEyeL)"><rect x="690" y="535" width="75" height="40" fill="#e6e4e0"/>
<circle cx="729.6" cy="553.5" r="12" fill="#4b4639"/><circle cx="729.6" cy="553.5" r="7" fill="#2b2825"/><circle cx="733" cy="550.8" r="1.7" fill="#fff"/></g>
<path d="M696.4,544.2 C703,541.5 709,540.8 714.7,541 C722,540.6 729,541 735,542.5 C741,544.3 747,547.8 751.2,552.8 C754,557 757,562 758.7,567.7" fill="none" stroke="#000" stroke-width="3" stroke-linecap="round"/>
<path d="M697.8,548.7 C703,552 710,555.5 717.4,558.2 C723,560.3 729,562 735,563.6 C743,565.5 751,566.8 757.5,567" fill="none" stroke="#000" stroke-width="1.5" stroke-linecap="round"/>
<path d="M695.7,544 C702,540 709,539.5 714.7,540 C724,540.5 734,542 740.4,544.7 C748,548 755,551 760.7,554.2" fill="none" stroke="#000" stroke-width="1.2" stroke-linecap="round"/>
<clipPath id="cpEyeR"><path d="M824.4,584 C829,578 834,573.5 839.3,570.4 C846,567.5 853,566.5 859.6,567 C866,568 872,571 877.2,575.8 L882,590 L824,590 Z"/></clipPath>
<g clip-path="url(#cpEyeR)"><rect x="820" y="560" width="70" height="32" fill="#e6e4e0"/>
<circle cx="850.8" cy="578.5" r="11.5" fill="#4b4639"/><circle cx="850.8" cy="578.5" r="6.8" fill="#2b2825"/><circle cx="853" cy="575.5" r="1.7" fill="#fff"/></g>
<path d="M824.4,583.3 C829,577.5 834,573 839.3,570.4 C846,567.3 853,566.3 859.6,567 C866,568 872,571 877.2,575.8 L881.2,585.3" fill="none" stroke="#000" stroke-width="3.2" stroke-linecap="round"/>
<path d="M859.6,567.5 C867,568.5 877,572 884,577.5" fill="none" stroke="#000" stroke-width="1.2" stroke-linecap="round"/>
</svg>
</div>
<div id="vscroll" class="a"><svg class="a" style="left:3.5px;top:4px;" width="10" height="8" viewBox="0 0 10 8"><path d="M1,6 L5,2 L9,6" fill="none" stroke="#b8b8b8" stroke-width="1.5"/></svg><div class="a" style="left:2px;top:448px;width:12px;height:26px;background:#6a6a6a;border-radius:6px"></div><svg class="a" style="left:3.5px;top:916px;" width="10" height="8" viewBox="0 0 10 8"><path d="M1,2 L5,6 L9,2" fill="none" stroke="#b8b8b8" stroke-width="1.5"/></svg></div>
<div id="status" class="a"><div class="a" style="left:0px;top:0px;width:1342px;height:1px;background:#3e3e3e;"></div><div class="a" style="left:0px;top:1px;width:54px;height:17px;background:#4a4a4a;"></div><div class="t" style="left:7px;top:4.5px;font-size:10px;line-height:14px;color:#e8e8e8;font-weight:400;">66.67%</div><div class="a" style="left:54px;top:1px;width:16px;height:17px;background:#4e4e4e;"></div><svg class="a" style="left:57.5px;top:7.5px;" width="9" height="7" viewBox="0 0 9 7"><path d="M1,1.5 L4.5,5.5 L8,1.5" fill="none" stroke="#e0e0e0" stroke-width="1.5"/></svg><div class="a" style="left:72px;top:1px;width:22px;height:17px;background:#4c4c4c;"></div><svg class="a" style="left:81px;top:5px;" width="9" height="9" viewBox="0 0 9 9"><path d="M1,0V9" stroke="#686868" stroke-width="1.5"/><path d="M9,0V9L2.5,4.5Z" fill="#686868"/></svg><div class="a" style="left:334px;top:1px;width:80px;height:17px;background:#4e4e4e;"></div><svg class="a" style="left:419px;top:4.5px;" width="7" height="10" viewBox="0 0 7 10"><path d="M0,0V10L7,5Z" fill="#c8c8c8"/></svg><div class="a" style="left:430px;top:1px;width:1px;height:17px;background:#454545;"></div><svg class="a" style="left:437px;top:5px;" width="6" height="9" viewBox="0 0 6 9"><path d="M5,0.5L1,4.5L5,8.5" fill="none" stroke="#c0c0c0" stroke-width="1.4"/></svg><div class="a" style="left:866px;top:4px;width:26px;height:11px;background:#636363;border-radius:6px"></div><svg class="a" style="left:1313px;top:5px;" width="6" height="9" viewBox="0 0 6 9"><path d="M1,0.5L5,4.5L1,8.5" fill="none" stroke="#c0c0c0" stroke-width="1.4"/></svg></div>
<div class="a" style="left:1416px;top:65px;width:2px;height:975px;background:#3a3a3a"></div>
<div id="dockA" class="a"><div class="a" style="left:0px;top:0px;width:248px;height:13px;background:#484848;"></div><svg class="a" style="left:233px;top:2.5px;" width="10" height="7" viewBox="0 0 10 7"><path d="M1,0.5 L4,3.5 L1,6.5Z M6,0.5 L9,3.5 L6,6.5Z" fill="#c0c0c0"/></svg><div class="a" style="left:0px;top:13px;width:248px;height:26px;background:#424242;"></div><div class="a" style="left:0px;top:13px;width:80px;height:27px;background:#535353;"></div><div class="t" style="left:15px;top:19.5px;font-size:10px;line-height:14px;color:#f4f4f4;font-weight:700;letter-spacing:-.3px">Color Guide</div><svg class="a" style="left:230.5px;top:21px;" width="12" height="10" viewBox="0 0 12 10"><path d="M0,1.5H12M0,5H12M0,8.5H12" stroke="#c8c8c8" stroke-width="1.2"/></svg><svg class="a" style="left:4.5px;top:20.5px;" width="6" height="10" viewBox="0 0 6 10"><path d="M0.5,4 L3,1 L5.5,4Z M0.5,6 L3,9 L5.5,6Z" fill="#b0b0b0"/></svg><div class="a" style="left:80px;top:38px;width:168px;height:1px;background:#3a3a3a;"></div><div class="a" style="left:8px;top:50px;width:16px;height:16px;background:#fff;border:1px solid #000;box-shadow:0 0 0 2px #fff"></div><div class="a" style="left:32px;top:46.5px;width:210px;height:23px;background:#535353;border:1px solid #454545"></div><div class="a" style="left:35.5px;top:50.5px;width:15px;height:15.5px;background:#fff;border:1px solid #000"></div><div class="a" style="left:51.5px;top:50.5px;width:16px;height:15.5px;background:#b8a8a4;"></div><div class="a" style="left:67.5px;top:50.5px;width:16px;height:15.5px;background:#c0b8ac;"></div><div class="a" style="left:83.5px;top:50.5px;width:16px;height:15.5px;background:#c0fad8;"></div><div class="a" style="left:99.5px;top:50.5px;width:16px;height:15.5px;background:#9a9ac0;"></div><div class="a" style="left:224px;top:47.5px;width:1px;height:21px;background:#454545;"></div><svg class="a" style="left:228.5px;top:54px;" width="10" height="8" viewBox="0 0 10 8"><path d="M1,2 L5,6 L9,2" fill="none" stroke="#dcdcdc" stroke-width="1.6"/></svg><div class="t" style="left:32px;top:77.8px;font-size:10.5px;line-height:14.5px;color:#b4b4b4;font-weight:700;letter-spacing:-.2px">Shades</div><svg class="a" style="left:120px;top:84px;" width="6" height="4" viewBox="0 0 6 4"><path d="M0,0H6L3,3.5Z" fill="#b4b4b4"/></svg><div class="t" style="left:190px;top:77.8px;font-size:10.5px;line-height:14.5px;color:#b4b4b4;font-weight:700;letter-spacing:-.2px">Tints</div><div class="a" style="left:6px;top:98px;width:25.25px;height:13.9px;background:#000;"></div><div class="a" style="left:32.25px;top:98px;width:25.25px;height:13.9px;background:#404040;"></div><div class="a" style="left:58.5px;top:98px;width:25.25px;height:13.9px;background:#808080;"></div><div class="a" style="left:84.75px;top:98px;width:25.25px;height:13.9px;background:#c8c8c8;"></div><div class="a" style="left:111px;top:98px;width:25.25px;height:13.9px;background:#fff;"></div><div class="a" style="left:137.25px;top:98px;width:25.25px;height:13.9px;background:#fff;"></div><div class="a" style="left:163.5px;top:98px;width:25.25px;height:13.9px;background:#fff;"></div><div class="a" style="left:189.75px;top:98px;width:25.25px;height:13.9px;background:#fff;"></div><div class="a" style="left:216px;top:98px;width:25.25px;height:13.9px;background:#fff;"></div><div class="a" style="left:6px;top:112.9px;width:25.25px;height:13.9px;background:#000;"></div><div class="a" style="left:32.25px;top:112.9px;width:25.25px;height:13.9px;background:#2e2a2a;"></div><div class="a" style="left:58.5px;top:112.9px;width:25.25px;height:13.9px;background:#5c5452;"></div><div class="a" style="left:84.75px;top:112.9px;width:25.25px;height:13.9px;background:#8a7e7c;"></div><div class="a" style="left:111px;top:112.9px;width:25.25px;height:13.9px;background:#b8a8a4;"></div><div class="a" style="left:137.25px;top:112.9px;width:25.25px;height:13.9px;background:#c6b9b6;"></div><div class="a" style="left:163.5px;top:112.9px;width:25.25px;height:13.9px;background:#d4cbc8;"></div><div class="a" style="left:189.75px;top:112.9px;width:25.25px;height:13.9px;background:#e3dcdb;"></div><div class="a" style="left:216px;top:112.9px;width:25.25px;height:13.9px;background:#f1eeed;"></div><div class="a" style="left:6px;top:127.8px;width:25.25px;height:13.9px;background:#000;"></div><div class="a" style="left:32.25px;top:127.8px;width:25.25px;height:13.9px;background:#2c2b28;"></div><div class="a" style="left:58.5px;top:127.8px;width:25.25px;height:13.9px;background:#59574f;"></div><div class="a" style="left:84.75px;top:127.8px;width:25.25px;height:13.9px;background:#868277;"></div><div class="a" style="left:111px;top:127.8px;width:25.25px;height:13.9px;background:#b3ae9f;"></div><div class="a" style="left:137.25px;top:127.8px;width:25.25px;height:13.9px;background:#c2beb2;"></div><div class="a" style="left:163.5px;top:127.8px;width:25.25px;height:13.9px;background:#d1cec5;"></div><div class="a" style="left:189.75px;top:127.8px;width:25.25px;height:13.9px;background:#e1dfd9;"></div><div class="a" style="left:216px;top:127.8px;width:25.25px;height:13.9px;background:#f0efec;"></div><div class="a" style="left:6px;top:142.7px;width:25.25px;height:13.9px;background:#000;"></div><div class="a" style="left:32.25px;top:142.7px;width:25.25px;height:13.9px;background:#2f3e35;"></div><div class="a" style="left:58.5px;top:142.7px;width:25.25px;height:13.9px;background:#5e7c6a;"></div><div class="a" style="left:84.75px;top:142.7px;width:25.25px;height:13.9px;background:#8dba9f;"></div><div class="a" style="left:111px;top:142.7px;width:25.25px;height:13.9px;background:#bcf8d4;"></div><div class="a" style="left:137.25px;top:142.7px;width:25.25px;height:13.9px;background:#c9f9dd;"></div><div class="a" style="left:163.5px;top:142.7px;width:25.25px;height:13.9px;background:#d6fae5;"></div><div class="a" style="left:189.75px;top:142.7px;width:25.25px;height:13.9px;background:#e4fcee;"></div><div class="a" style="left:216px;top:142.7px;width:25.25px;height:13.9px;background:#f1fdf6;"></div><div class="a" style="left:6px;top:157.6px;width:25.25px;height:13.9px;background:#000;"></div><div class="a" style="left:32.25px;top:157.6px;width:25.25px;height:13.9px;background:#25252f;"></div><div class="a" style="left:58.5px;top:157.6px;width:25.25px;height:13.9px;background:#4a4a5e;"></div><div class="a" style="left:84.75px;top:157.6px;width:25.25px;height:13.9px;background:#6f6f8d;"></div><div class="a" style="left:111px;top:157.6px;width:25.25px;height:13.9px;background:#9494bc;"></div><div class="a" style="left:137.25px;top:157.6px;width:25.25px;height:13.9px;background:#a9a9c9;"></div><div class="a" style="left:163.5px;top:157.6px;width:25.25px;height:13.9px;background:#bebed6;"></div><div class="a" style="left:189.75px;top:157.6px;width:25.25px;height:13.9px;background:#d4d4e4;"></div><div class="a" style="left:216px;top:157.6px;width:25.25px;height:13.9px;background:#e9e9f1;"></div><div class="a" style="left:5px;top:93px;width:238px;height:123px;background:transparent;border:1px solid #5a5a5a;border-top:none"></div><svg class="a" style="left:10px;top:220px;" width="14" height="10" viewBox="0 0 14 10"><rect x=".6" y=".6" width="10.8" height="7.8" fill="none" stroke="#c8c8c8" stroke-width="1"/><path d="M4,1V8.5M8,1V8.5M1,4.5H11" stroke="#c8c8c8" stroke-width="1"/><rect x="12.5" y="8" width="1.5" height="1.5" fill="#c8c8c8"/></svg><div class="t" style="left:37px;top:219px;font-size:10px;line-height:14px;color:#c8c8c8;font-weight:400;">None</div><svg class="a" style="left:182.5px;top:219px;" width="12" height="12" viewBox="0 0 12 12"><circle cx="6" cy="6" r="5.5" fill="#c8c8c8"/><circle cx="4" cy="4" r="1.2" fill="#535353"/><circle cx="7.5" cy="3.5" r="1.2" fill="#535353"/><circle cx="4" cy="8" r="1.2" fill="#535353"/><circle cx="8.5" cy="7.5" r="1.8" fill="#535353"/></svg><svg class="a" style="left:207.5px;top:219px;" width="15" height="12" viewBox="0 0 15 12"><path d="M0,6H5M2.5,3.5V8.5" stroke="#d0d0d0" stroke-width="1.3"/><rect x="6.6" y="1.6" width="7.8" height="8.8" fill="none" stroke="#d0d0d0" stroke-width="1.1"/><path d="M10.5,2V10" stroke="#d0d0d0" stroke-width="1"/></svg><div class="a" style="left:0px;top:235px;width:248px;height:3px;background:#3e3e3e;"></div><div class="a" style="left:0px;top:238px;width:248px;height:26px;background:#424242;"></div><div class="a" style="left:0px;top:238px;width:62px;height:27px;background:#535353;"></div><div class="t" style="left:9px;top:244.5px;font-size:10px;line-height:14px;color:#f4f4f4;font-weight:700;letter-spacing:-.3px">Swatches</div><div class="a" style="left:63px;top:239px;width:54px;height:24px;background:#4a4a4a;"></div><div class="t" style="left:71px;top:244.5px;font-size:10px;line-height:14px;color:#a6a6a6;font-weight:700;letter-spacing:-.3px">Brushes</div><div class="a" style="left:118px;top:239px;width:56px;height:24px;background:#4a4a4a;"></div><div class="t" style="left:126px;top:244.5px;font-size:10px;line-height:14px;color:#a6a6a6;font-weight:700;letter-spacing:-.3px">Symbols</div><svg class="a" style="left:230.5px;top:246px;" width="12" height="10" viewBox="0 0 12 10"><path d="M0,1.5H12M0,5H12M0,8.5H12" stroke="#c8c8c8" stroke-width="1.2"/></svg><div class="a" style="left:62px;top:263px;width:186px;height:1px;background:#3a3a3a;"></div><div class="a" style="left:16px;top:281.5px;width:18px;height:18.5px;background:#000;border:1px solid #fff;box-shadow:inset 0 0 0 1px #000, inset 0 0 0 2px #fff"></div><div class="a" style="left:21px;top:287px;width:8px;height:8px;background:#535353;border:1px solid #fff"></div><div class="a" style="left:6px;top:271.5px;width:18.5px;height:18.5px;background:#fff;border:1px solid #3a3a3a"></div><svg class="a" style="left:199px;top:276px;" width="13" height="13" viewBox="0 0 13 13"><path d="M0,1.5H13M0,5H13M0,8.5H13M0,12H13" stroke="#c8c8c8" stroke-width="1.5"/></svg><div class="a" style="left:219px;top:272px;width:23px;height:22px;background:#2b2b2b;border-radius:1px"></div><svg class="a" style="left:223.5px;top:276px;" width="14" height="14" viewBox="0 0 14 14"><path d="M0,2H14M0,7H14M0,12H14" stroke="#fff" stroke-width="3.6" stroke-dasharray="3.8 1.3"/></svg><svg class="a" style="left:6px;top:307px;" width="13" height="13" viewBox="0 0 13 13"><rect width="13" height="13" fill="#fff"/><path d="M0,13L13,0" stroke="#e0202a" stroke-width="2"/></svg><svg class="a" style="left:20px;top:307px;" width="13" height="13" viewBox="0 0 13 13"><rect width="13" height="13" fill="#f4f4f4"/><circle cx="6.5" cy="6.5" r="4" fill="none" stroke="#555" stroke-width="1"/><circle cx="6.5" cy="6.5" r="1.5" fill="none" stroke="#555" stroke-width=".8"/><path d="M6.5,0V13M0,6.5H13" stroke="#555" stroke-width=".8"/></svg><div class="a" style="left:34px;top:307px;width:13px;height:13px;background:#fff;border:1px solid #111;box-shadow:inset 0 0 0 1px #fff, inset 0 0 0 2px #bbb"></div><div class="a" style="left:48px;top:307px;width:13px;height:13px;background:#ed1c24;"></div><div class="a" style="left:62px;top:307px;width:13px;height:13px;background:#fff200;"></div><div class="a" style="left:76px;top:307px;width:13px;height:13px;background:#0be00b;"></div><div class="a" style="left:90px;top:307px;width:13px;height:13px;background:#00ffff;"></div><div class="a" style="left:104px;top:307px;width:13px;height:13px;background:#0010e8;"></div><div class="a" style="left:118px;top:307px;width:13px;height:13px;background:#ff00ff;"></div><div class="a" style="left:132px;top:307px;width:13px;height:13px;background:#e0202a;"></div><div class="a" style="left:146px;top:307px;width:13px;height:13px;background:#ee2535;"></div><div class="a" style="left:160px;top:307px;width:13px;height:13px;background:#f06524;"></div><div class="a" style="left:174px;top:307px;width:13px;height:13px;background:#f7931e;"></div><div class="a" style="left:188px;top:307px;width:13px;height:13px;background:#fbb03b;"></div><div class="a" style="left:202px;top:307px;width:13px;height:13px;background:#fcee21;"></div><div class="a" style="left:216px;top:307px;width:13px;height:13px;background:#d9e021;"></div><div class="a" style="left:6px;top:321.5px;width:13px;height:13px;background:#8cc63f;"></div><div class="a" style="left:20px;top:321.5px;width:13px;height:13px;background:#39b54a;"></div><div class="a" style="left:34px;top:321.5px;width:13px;height:13px;background:#009245;"></div><div class="a" style="left:48px;top:321.5px;width:13px;height:13px;background:#006837;"></div><div class="a" style="left:62px;top:321.5px;width:13px;height:13px;background:#22b573;"></div><div class="a" style="left:76px;top:321.5px;width:13px;height:13px;background:#00a99d;"></div><div class="a" style="left:90px;top:321.5px;width:13px;height:13px;background:#29abe2;"></div><div class="a" style="left:104px;top:321.5px;width:13px;height:13px;background:#0071bc;"></div><div class="a" style="left:118px;top:321.5px;width:13px;height:13px;background:#2e3192;"></div><div class="a" style="left:132px;top:321.5px;width:13px;height:13px;background:#1b1464;"></div><div class="a" style="left:146px;top:321.5px;width:13px;height:13px;background:#662d91;"></div><div class="a" style="left:160px;top:321.5px;width:13px;height:13px;background:#93278f;"></div><div class="a" style="left:174px;top:321.5px;width:13px;height:13px;background:#9e005d;"></div><div class="a" style="left:188px;top:321.5px;width:13px;height:13px;background:#d4145a;"></div><div class="a" style="left:202px;top:321.5px;width:13px;height:13px;background:#ed1e79;"></div><div class="a" style="left:216px;top:321.5px;width:13px;height:13px;background:#c7b299;"></div><div class="a" style="left:6px;top:335.5px;width:13px;height:13px;background:#998675;"></div><div class="a" style="left:20px;top:335.5px;width:13px;height:13px;background:#736357;"></div><div class="a" style="left:34px;top:335.5px;width:13px;height:13px;background:#534741;"></div><div class="a" style="left:48px;top:335.5px;width:13px;height:13px;background:#c69c6d;"></div><div class="a" style="left:62px;top:335.5px;width:13px;height:13px;background:#a67c52;"></div><div class="a" style="left:76px;top:335.5px;width:13px;height:13px;background:#8c6239;"></div><div class="a" style="left:90px;top:335.5px;width:13px;height:13px;background:#754c24;"></div><div class="a" style="left:104px;top:335.5px;width:13px;height:13px;background:#603813;"></div><div class="a" style="left:118px;top:335.5px;width:13px;height:13px;background:#42210b;"></div><div class="a" style="left:132px;top:335.5px;width:13px;height:13px;background:linear-gradient(90deg,#fff,#000);"></div><div class="a" style="left:146px;top:335.5px;width:13px;height:13px;background:linear-gradient(90deg,#fff,#0a7fc4);"></div><div class="a" style="left:160px;top:335.5px;width:13px;height:13px;background:#f4c0d0;"></div><div class="a" style="left:174px;top:335.5px;width:13px;height:13px;background:radial-gradient(circle,#fde8a0,#f7931e 70%);"></div><div class="a" style="left:188px;top:335.5px;width:13px;height:13px;background:#f2ece4;"></div><div class="a" style="left:202px;top:335.5px;width:13px;height:13px;background:#3a86c4;"></div><div class="a" style="left:216px;top:335.5px;width:13px;height:13px;background:#b4dcc8;"></div><div class="a" style="left:6px;top:349.5px;width:13px;height:13px;background:#c69c82;"></div><div class="a" style="left:20px;top:349.5px;width:13px;height:13px;background:#c99e84;"></div><div class="a" style="left:34px;top:349.5px;width:13px;height:13px;background:#c69a80;"></div><svg class="a" style="left:7.5px;top:366.5px;" width="10" height="10" viewBox="0 0 10 10"><path d="M0,1.5 H4 L5,3 H10 V9.5 H0Z" fill="#c8c8c8"/><rect x="1" y="5" width="4" height="3.5" fill="#535353"/></svg><svg class="a" style="left:7.5px;top:382px;" width="10" height="10" viewBox="0 0 10 10"><path d="M0,1.5 H4 L5,3 H10 V9.5 H0Z" fill="#c8c8c8"/><rect x="1" y="5" width="4" height="3.5" fill="#535353"/></svg><svg class="a" style="left:7.5px;top:398.5px;" width="10" height="10" viewBox="0 0 10 10"><path d="M0,1.5 H4 L5,3 H10 V9.5 H0Z" fill="#c8c8c8"/><rect x="1" y="5" width="4" height="3.5" fill="#535353"/></svg><div class="a" style="left:20px;top:365px;width:13px;height:13px;background:#1a1a1a;"></div><div class="a" style="left:34px;top:365px;width:13px;height:13px;background:#333;"></div><div class="a" style="left:48px;top:365px;width:13px;height:13px;background:#4d4d4d;"></div><div class="a" style="left:62px;top:365px;width:13px;height:13px;background:#666;"></div><div class="a" style="left:76px;top:365px;width:13px;height:13px;background:#808080;"></div><div class="a" style="left:90px;top:365px;width:13px;height:13px;background:#999;"></div><div class="a" style="left:104px;top:365px;width:13px;height:13px;background:#b3b3b3;"></div><div class="a" style="left:118px;top:365px;width:13px;height:13px;background:#ccc;"></div><div class="a" style="left:132px;top:365px;width:13px;height:13px;background:#e6e6e6;"></div><div class="a" style="left:146px;top:365px;width:13px;height:13px;background:#f2f2f2;"></div><div class="a" style="left:20px;top:380.5px;width:13px;height:13px;background:#3fa9f5;"></div><div class="a" style="left:34px;top:380.5px;width:13px;height:13px;background:#7ac943;"></div><div class="a" style="left:48px;top:380.5px;width:13px;height:13px;background:#ff931e;"></div><div class="a" style="left:62px;top:380.5px;width:13px;height:13px;background:#ff1d25;"></div><div class="a" style="left:76px;top:380.5px;width:13px;height:13px;background:#ff7bac;"></div><div class="a" style="left:90px;top:380.5px;width:13px;height:13px;background:#bdccd4;"></div><div class="a" style="left:20px;top:397px;width:13px;height:13px;background:#000;"></div><div class="a" style="left:34px;top:397px;width:13px;height:13px;background:#e6e6e6;"></div><svg class="a" style="left:40px;top:403px;" width="7" height="7" viewBox="0 0 7 7"><path d="M7,0V7H0Z" fill="#fff" stroke="#000" stroke-width=".8"/></svg><div class="a" style="left:48px;top:397px;width:13px;height:13px;background:#6b5a3e;"></div><svg class="a" style="left:54px;top:403px;" width="7" height="7" viewBox="0 0 7 7"><path d="M7,0V7H0Z" fill="#fff" stroke="#000" stroke-width=".8"/></svg><div class="a" style="left:62px;top:397px;width:13px;height:13px;background:#26262b;"></div><svg class="a" style="left:68px;top:403px;" width="7" height="7" viewBox="0 0 7 7"><path d="M7,0V7H0Z" fill="#fff" stroke="#000" stroke-width=".8"/></svg><div class="a" style="left:76px;top:397px;width:13px;height:13px;background:#b3aead;"></div><svg class="a" style="left:82px;top:403px;" width="7" height="7" viewBox="0 0 7 7"><path d="M7,0V7H0Z" fill="#fff" stroke="#000" stroke-width=".8"/></svg><div class="a" style="left:90px;top:397px;width:13px;height:13px;background:#efcfae;"></div><svg class="a" style="left:96px;top:403px;" width="7" height="7" viewBox="0 0 7 7"><path d="M7,0V7H0Z" fill="#fff" stroke="#000" stroke-width=".8"/></svg><div class="a" style="left:104px;top:397px;width:13px;height:13px;background:#f2e4da;"></div><svg class="a" style="left:110px;top:403px;" width="7" height="7" viewBox="0 0 7 7"><path d="M7,0V7H0Z" fill="#fff" stroke="#000" stroke-width=".8"/></svg><div class="a" style="left:118px;top:397px;width:13px;height:13px;background:#ecc49f;"></div><svg class="a" style="left:124px;top:403px;" width="7" height="7" viewBox="0 0 7 7"><path d="M7,0V7H0Z" fill="#fff" stroke="#000" stroke-width=".8"/></svg><div class="a" style="left:132px;top:397px;width:13px;height:13px;background:#d9a98f;"></div><svg class="a" style="left:138px;top:403px;" width="7" height="7" viewBox="0 0 7 7"><path d="M7,0V7H0Z" fill="#fff" stroke="#000" stroke-width=".8"/></svg><div class="a" style="left:146px;top:397px;width:13px;height:13px;background:#c49a80;"></div><svg class="a" style="left:152px;top:403px;" width="7" height="7" viewBox="0 0 7 7"><path d="M7,0V7H0Z" fill="#fff" stroke="#000" stroke-width=".8"/></svg><div class="a" style="left:160px;top:397px;width:13px;height:13px;background:#b08669;"></div><svg class="a" style="left:166px;top:403px;" width="7" height="7" viewBox="0 0 7 7"><path d="M7,0V7H0Z" fill="#fff" stroke="#000" stroke-width=".8"/></svg><div class="a" style="left:6px;top:304px;width:236px;height:111px;background:transparent;border:1px solid #5a5a5a;border-top:none;border-left:none"></div><svg class="a" style="left:11px;top:422px;" width="12" height="12" viewBox="0 0 12 12"><path d="M1,1V11M3.5,1V11M6,1.5L9,11" stroke="#d0d0d0" stroke-width="1.6" fill="none"/><rect x="10.5" y="10" width="1.5" height="1.5" fill="#d0d0d0"/></svg><svg class="a" style="left:38px;top:422px;" width="12" height="12" viewBox="0 0 12 12"><circle cx="4" cy="6" r="2.5" fill="none" stroke="#d0d0d0" stroke-width="1.2"/><path d="M6,4.5L10,1.5M6,7.5L10,10.5M6.5,6H11" stroke="#d0d0d0" stroke-width="1.1"/></svg><svg class="a" style="left:63px;top:421px;" width="14" height="14" viewBox="0 0 14 14"><rect x="3.6" y=".6" width="9.8" height="9.8" fill="none" stroke="#d0d0d0" stroke-width="1.1"/><rect x=".6" y="3.6" width="7" height="7" fill="#535353" stroke="#d0d0d0" stroke-width="1.1"/><path d="M3,11 L8,11 M6,9 L8,11 L6,13" stroke="#d0d0d0" stroke-width="1.1" fill="none"/></svg><svg class="a" style="left:102.5px;top:422px;" width="14" height="12" viewBox="0 0 14 12"><path d="M0,2H11M0,6H11M0,10H11" stroke="#d0d0d0" stroke-width="2.8" stroke-dasharray="3 1"/><rect x="12.5" y="10" width="1.5" height="1.5" fill="#d0d0d0"/></svg><svg class="a" style="left:130px;top:422px;" width="13" height="12" viewBox="0 0 13 12"><rect x=".6" y=".6" width="11.8" height="10.8" fill="none" stroke="#d0d0d0" stroke-width="1.1"/><path d="M1,3H12" stroke="#d0d0d0" stroke-width="1.1"/><path d="M3,5.5H4.5M6,5.5H10.5M3,8H4.5M6,8H10.5" stroke="#d0d0d0" stroke-width="1"/></svg><svg class="a" style="left:155.5px;top:422px;" width="13" height="12" viewBox="0 0 13 12"><path d="M0,1 H5 L6.5,3 H13 V11 H0Z" fill="#d0d0d0"/></svg><svg class="a" style="left:183px;top:422px;" width="12" height="12" viewBox="0 0 12 12"><rect x=".6" y=".6" width="10.8" height="10.8" fill="none" stroke="#d0d0d0" stroke-width="1.1"/><path d="M6,3V9M3,6H9" stroke="#d0d0d0" stroke-width="1.1"/></svg><svg class="a" style="left:209px;top:421px;" width="11" height="14" viewBox="0 0 11 14"><path d="M0,2.5H11M3.5,2.5V.6H7.5V2.5" stroke="#d0d0d0" fill="none" stroke-width="1.1"/><path d="M1.5,3.5 L2,13 H9 L9.5,3.5" fill="none" stroke="#d0d0d0" stroke-width="1.1"/><path d="M3.8,5V11.5M5.5,5V11.5M7.2,5V11.5" stroke="#d0d0d0" stroke-width=".9"/></svg><div class="a" style="left:0px;top:437px;width:248px;height:3px;background:#3e3e3e;"></div><div class="a" style="left:0px;top:440px;width:248px;height:27px;background:#424242;"></div><div class="a" style="left:0px;top:441px;width:48px;height:25px;background:#4a4a4a;"></div><div class="t" style="left:9px;top:447px;font-size:10px;line-height:14px;color:#a6a6a6;font-weight:700;letter-spacing:-.3px">Stroke</div><div class="a" style="left:51px;top:440px;width:86px;height:28px;background:#535353;"></div><div class="t" style="left:66.5px;top:447px;font-size:10px;line-height:14px;color:#f4f4f4;font-weight:700;letter-spacing:-.3px">Transparency</div><svg class="a" style="left:230.5px;top:448.5px;" width="12" height="10" viewBox="0 0 12 10"><path d="M0,1.5H12M0,5H12M0,8.5H12" stroke="#c8c8c8" stroke-width="1.2"/></svg><svg class="a" style="left:55px;top:449px;" width="6" height="10" viewBox="0 0 6 10"><path d="M0.5,4 L3,1 L5.5,4Z M0.5,6 L3,9 L5.5,6Z" fill="#b0b0b0"/></svg><div class="a" style="left:137px;top:466px;width:111px;height:1px;background:#3a3a3a;"></div><div class="a" style="left:6px;top:475.5px;width:91px;height:19px;background:#4e4e4e;border:1px solid #484848;border-radius:2px"></div><div class="t" style="left:12px;top:479px;font-size:10px;line-height:14px;color:#f4f4f4;font-weight:400;">Normal</div><svg class="a" style="left:83px;top:481px;" width="10" height="8" viewBox="0 0 10 8"><path d="M1,2 L5,6 L9,2" fill="none" stroke="#dcdcdc" stroke-width="1.6"/></svg><div class="t" style="left:103.5px;top:479px;font-size:10px;line-height:14px;color:#d8d8d8;font-weight:400;letter-spacing:-.15px">Opacity:</div><div class="a" style="left:144px;top:475.5px;width:68px;height:19px;background:#4c4c4c;border-radius:2px"></div><div class="a" style="left:145px;top:475.5px;width:49px;height:19px;background:#454545;"></div><div class="t" style="left:147.5px;top:478.5px;font-size:10px;line-height:14px;color:#f0f0f0;font-weight:400;">100%</div><svg class="a" style="left:199px;top:480px;" width="8" height="10" viewBox="0 0 8 10"><path d="M2,1 L6,5 L2,9" fill="none" stroke="#dcdcdc" stroke-width="1.6"/></svg><div class="a" style="left:6px;top:501px;width:236px;height:1px;background:#4a4a4a;"></div><div class="a" style="left:6px;top:504px;width:133px;height:59px;background:#565656;"></div><div class="a" style="left:144px;top:508px;width:78px;height:19px;background:#5b5b5b;border-radius:2px"></div><div class="t" style="left:158px;top:511px;font-size:10px;line-height:14px;color:#6e6e6e;font-weight:700;letter-spacing:-.2px">Make Mask</div><div class="a" style="left:145.5px;top:534px;width:11px;height:11px;background:transparent;border:1px solid #6a6a6a;border-radius:1px"></div><div class="t" style="left:162px;top:533px;font-size:10px;line-height:14px;color:#6e6e6e;font-weight:400;">Clip</div><div class="a" style="left:145.5px;top:554px;width:11px;height:11px;background:transparent;border:1px solid #6a6a6a;border-radius:1px"></div><div class="t" style="left:162px;top:553px;font-size:10px;line-height:14px;color:#6e6e6e;font-weight:400;">Invert Mask</div><div class="a" style="left:0px;top:571px;width:248px;height:3px;background:#3e3e3e;"></div><div class="a" style="left:0px;top:574.5px;width:248px;height:26px;background:#424242;"></div><div class="a" style="left:0px;top:574.5px;width:84px;height:27px;background:#535353;"></div><div class="t" style="left:9px;top:581px;font-size:10px;line-height:14px;color:#f4f4f4;font-weight:700;letter-spacing:-.3px">Graphic Styles</div><svg class="a" style="left:230.5px;top:582.5px;" width="12" height="10" viewBox="0 0 12 10"><path d="M0,1.5H12M0,5H12M0,8.5H12" stroke="#c8c8c8" stroke-width="1.2"/></svg><div class="a" style="left:84px;top:599px;width:164px;height:1px;background:#3a3a3a;"></div><div class="a" style="left:6px;top:607px;width:236px;height:203px;background:transparent;border:1px solid #5a5a5a;border-top:none;border-left:none"></div><svg width="0" height="0" class="a"><defs><linearGradient id="gsg" x1="0" y1="0" x2="0" y2="1"><stop offset="0" stop-color="#9a9a9a"/><stop offset=".3" stop-color="#8a8a8a"/><stop offset=".42" stop-color="#222"/><stop offset="1" stop-color="#909090"/></linearGradient></defs></svg><svg class="a" style="left:6px;top:609px;" width="32" height="32" viewBox="0 0 32 32"><rect width="32" height="32" fill="#e9e9e9"/><rect x="4.5" y="4.5" width="23" height="22" fill="#fff" stroke="#c8c8c8"/><rect x="6" y="21" width="6" height="6" fill="#fff" stroke="#000" stroke-width="1.2"/><rect x="3.5" y="18.5" width="6" height="6" fill="#fff" stroke="#000" stroke-width="1.2"/></svg><svg class="a" style="left:39px;top:609px;" width="32" height="32" viewBox="0 0 32 32"><rect width="32" height="32" fill="#e4e4e4"/><rect x="8" y="8" width="15" height="14" fill="#d0d0d0"/><rect x="6" y="6" width="15" height="14" fill="#fff"/><rect x="4.5" y="20.5" width="7" height="7" fill="#fff" stroke="#a02040" stroke-width="1.2"/><path d="M5,27L11,21" stroke="#a02040" stroke-width="1.2"/></svg><svg class="a" style="left:72px;top:609px;" width="32" height="32" viewBox="0 0 32 32"><rect width="32" height="32" fill="#e4e4e4"/><rect x="10" y="10" width="15" height="14" fill="#d0d0d0"/><rect x="8" y="8" width="15" height="14" fill="#fff"/><rect x="4.5" y="20.5" width="7" height="7" fill="#fff" stroke="#a02040" stroke-width="1.2"/><path d="M5,27L11,21" stroke="#a02040" stroke-width="1.2"/></svg><svg class="a" style="left:105px;top:609px;" width="32" height="32" viewBox="0 0 32 32"><rect width="32" height="32" fill="#e9e9e9"/><rect x="5" y="5" width="22" height="21" rx="2" fill="#f2e2d4" stroke="#7aa8dc" stroke-width="2"/></svg><svg class="a" style="left:138px;top:609px;" width="32" height="32" viewBox="0 0 32 32"><rect width="32" height="32" fill="#e9e9e9"/><rect x="4" y="4" width="24" height="24" fill="url(#gsg)"/></svg><svg class="a" style="left:171px;top:609px;" width="32" height="32" viewBox="0 0 32 32"><rect width="32" height="32" fill="#e9e9e9"/><rect x="4" y="4" width="24" height="24" fill="#1f4f9a"/><path d="M6,26 C8,16 14,10 20,5 C18,14 14,20 10,27Z" fill="#f0e040"/><path d="M14,27 C16,20 22,14 27,12 C25,20 20,25 16,28Z" fill="#58c0a0"/><path d="M5,14 C8,10 12,7 15,5 C12,12 9,16 5,20Z" fill="#58c0a0"/><path d="M20,27 C22,22 25,18 28,17 L28,27Z" fill="#f0e040"/></svg><svg class="a" style="left:6px;top:642.5px;" width="32" height="32" viewBox="0 0 32 32"><rect width="32" height="32" fill="#e9e9e9"/><rect x="4" y="4" width="24" height="24" fill="#8fb4a0"/><path d="M4,4H28V14L16,18L4,12Z" fill="#a4c4b4"/><path d="M16,18L28,14V28H12Z" fill="#8ec0d8"/><path d="M4,12L16,18L12,28H4Z" fill="#88ac94"/></svg><svg class="a" style="left:11px;top:817px;" width="12" height="12" viewBox="0 0 12 12"><path d="M1,1V11M3.5,1V11M6,1.5L9,11" stroke="#d0d0d0" stroke-width="1.6" fill="none"/><rect x="10.5" y="10" width="1.5" height="1.5" fill="#d0d0d0"/></svg><svg class="a" style="left:156px;top:817px;" width="14" height="12" viewBox="0 0 14 12"><path d="M2,8 C0,6 2,3 4,4 L6,5 M12,4 C14,6 12,9 10,8 L8,7 M1,1L13,11" stroke="#6a6a6a" stroke-width="1.4" fill="none"/></svg><svg class="a" style="left:183px;top:817px;" width="12" height="12" viewBox="0 0 12 12"><rect x=".6" y=".6" width="10.8" height="10.8" fill="none" stroke="#d0d0d0" stroke-width="1.1"/><path d="M6,3V9M3,6H9" stroke="#d0d0d0" stroke-width="1.1"/></svg><svg class="a" style="left:209px;top:816px;" width="11" height="14" viewBox="0 0 11 14"><path d="M0,2.5H11M3.5,2.5V.6H7.5V2.5" stroke="#666" fill="none" stroke-width="1.1"/><path d="M1.5,3.5 L2,13 H9 L9.5,3.5" fill="none" stroke="#666" stroke-width="1.1"/><path d="M3.8,5V11.5M5.5,5V11.5M7.2,5V11.5" stroke="#666" stroke-width=".9"/></svg><div class="a" style="left:0px;top:833.5px;width:248px;height:3px;background:#3e3e3e;"></div><div class="a" style="left:0px;top:836.5px;width:248px;height:26px;background:#424242;"></div><div class="a" style="left:0px;top:837.5px;width:74px;height:24px;background:#4a4a4a;"></div><div class="t" style="left:9px;top:843px;font-size:10px;line-height:14px;color:#a6a6a6;font-weight:700;letter-spacing:-.3px">Asset Export</div><div class="a" style="left:77px;top:836.5px;width:65px;height:27px;background:#535353;"></div><div class="t" style="left:86.5px;top:843px;font-size:10px;line-height:14px;color:#f4f4f4;font-weight:700;letter-spacing:-.3px">Artboards</div><svg class="a" style="left:230.5px;top:844.5px;" width="12" height="10" viewBox="0 0 12 10"><path d="M0,1.5H12M0,5H12M0,8.5H12" stroke="#c8c8c8" stroke-width="1.2"/></svg><div class="a" style="left:142px;top:861.5px;width:106px;height:1px;background:#3a3a3a;"></div><div class="a" style="left:6px;top:866px;width:236px;height:87px;background:transparent;border:1px solid #5a5a5a;border-top:none;border-left:none"></div><div class="a" style="left:6px;top:870px;width:236.5px;height:18.5px;background:#4b6583;"></div><div class="t" style="left:11.5px;top:871.5px;font-size:13px;line-height:17px;color:#f4f4f4;font-weight:400;font-family:'Liberation Serif',serif">1</div><div class="t" style="left:52px;top:873px;font-size:10px;line-height:14px;color:#f4f4f4;font-weight:400;">Artboard 1</div><svg class="a" style="left:208px;top:872.5px;" width="14" height="12" viewBox="0 0 14 12"><path d="M3.5,0V3M0,3.5H3" stroke="#e8e8e8" stroke-width="1"/><path d="M4.5,3.5 H10.5 L13.5,6.5 V11.5 H4.5Z M10.5,3.5V6.5H13.5" fill="none" stroke="#e8e8e8" stroke-width="1.1"/></svg><svg class="a" style="left:12px;top:959px;" width="12" height="12" viewBox="0 0 12 12"><path d="M2,2L10,10M10,2L2,10" stroke="#646464" stroke-width="1.3"/><rect x="0" y="0" width="3.5" height="3.5" fill="#646464"/><rect x="8.5" y="0" width="3.5" height="3.5" fill="#646464"/><rect x="0" y="8.5" width="3.5" height="3.5" fill="#646464"/><rect x="8.5" y="8.5" width="3.5" height="3.5" fill="#646464"/></svg><svg class="a" style="left:130.5px;top:959.5px;" width="12" height="11" viewBox="0 0 12 11"><path d="M6,0L11,5.5H8V11H4V5.5H1Z" fill="#646464"/></svg><svg class="a" style="left:156.5px;top:959.5px;" width="12" height="11" viewBox="0 0 12 11"><path d="M6,11L11,5.5H8V0H4V5.5H1Z" fill="#646464"/></svg><svg class="a" style="left:183px;top:959px;" width="12" height="12" viewBox="0 0 12 12"><rect x=".6" y=".6" width="10.8" height="10.8" fill="none" stroke="#d8d8d8" stroke-width="1.1"/><path d="M6,3V9M3,6H9" stroke="#d8d8d8" stroke-width="1.1"/></svg><svg class="a" style="left:209px;top:958px;" width="11" height="14" viewBox="0 0 11 14"><path d="M0,2.5H11M3.5,2.5V.6H7.5V2.5" stroke="#646464" fill="none" stroke-width="1.1"/><path d="M1.5,3.5 L2,13 H9 L9.5,3.5" fill="none" stroke="#646464" stroke-width="1.1"/><path d="M3.8,5V11.5M5.5,5V11.5M7.2,5V11.5" stroke="#646464" stroke-width=".9"/></svg></div>
<div class="a" style="left:1666px;top:65px;width:3px;height:975px;background:#3a3a3a"></div>
<div id="dockB" class="a"><div class="a" style="left:0px;top:0px;width:251px;height:13px;background:#484848;"></div><svg class="a" style="left:235px;top:2.5px;" width="10" height="7" viewBox="0 0 10 7"><path d="M1,0.5 L4,3.5 L1,6.5Z M6,0.5 L9,3.5 L6,6.5Z" fill="#c0c0c0"/></svg><div class="a" style="left:0px;top:13px;width:251px;height:26px;background:#424242;"></div><div class="a" style="left:0px;top:13px;width:65px;height:27px;background:#535353;"></div><div class="t" style="left:9px;top:18.5px;font-size:10px;line-height:14px;color:#f4f4f4;font-weight:700;letter-spacing:-.25px">Properties</div><div class="a" style="left:66px;top:14px;width:57px;height:24px;background:#4a4a4a;"></div><div class="t" style="left:75px;top:18.5px;font-size:10px;line-height:14px;color:#a6a6a6;font-weight:700;letter-spacing:-.3px">Libraries</div><div class="a" style="left:65px;top:38px;width:185px;height:1px;background:#3a3a3a;"></div><div class="t" style="left:10px;top:50.5px;font-size:10px;line-height:14px;color:#dcdcdc;font-weight:400;">No Selection</div><div class="a" style="left:3px;top:73.5px;width:235px;height:1px;background:#494949;"></div><div class="t" style="left:10px;top:84px;font-size:10px;line-height:14px;color:#dcdcdc;font-weight:400;">Document</div><div class="t" style="right:172px;top:112.5px;font-size:10px;line-height:14px;color:#dcdcdc;font-weight:400;">Units:</div><div class="a" style="left:86px;top:109px;width:123px;height:19px;background:#4b4b4b;border:1px solid #444;border-radius:2px"></div><div class="t" style="left:92px;top:112.5px;font-size:10px;line-height:14px;color:#f4f4f4;font-weight:400;">Pixels</div><svg class="a" style="left:195.5px;top:114.5px;" width="10" height="8" viewBox="0 0 10 8"><path d="M1,2 L5,6 L9,2" fill="none" stroke="#dcdcdc" stroke-width="1.6"/></svg><div class="t" style="right:172px;top:141.5px;font-size:10px;line-height:14px;color:#dcdcdc;font-weight:400;">Artboard:</div><div class="a" style="left:86px;top:137.5px;width:73px;height:20px;background:#4c4c4c;border-radius:2px"></div><div class="a" style="left:87px;top:138px;width:54px;height:19px;background:#454545;"></div><div class="t" style="left:89.5px;top:140.5px;font-size:10px;line-height:14px;color:#f4f4f4;font-weight:400;">1</div><svg class="a" style="left:144.5px;top:143.5px;" width="10" height="8" viewBox="0 0 10 8"><path d="M1,2 L5,6 L9,2" fill="none" stroke="#dcdcdc" stroke-width="1.6"/></svg><svg class="a" style="left:172px;top:144px;" width="6" height="8" viewBox="0 0 6 8"><path d="M6,0V8L0,4Z" fill="#646464"/></svg><svg class="a" style="left:193px;top:144px;" width="6" height="8" viewBox="0 0 6 8"><path d="M0,0V8L6,4Z" fill="#646464"/></svg><div class="a" style="left:85px;top:166px;width:116px;height:20px;background:transparent;border:1px solid #6a6a6a;border-radius:3px"></div><div class="t" style="left:111px;top:170px;font-size:10px;line-height:14px;color:#f4f4f4;font-weight:700;letter-spacing:-.45px">Edit Artboards</div><div class="a" style="left:3px;top:201px;width:235px;height:1px;background:#494949;"></div><div class="t" style="left:10px;top:214px;font-size:10px;line-height:14px;color:#dcdcdc;font-weight:400;">Ruler &amp; Grids</div><svg class="a" style="left:99px;top:212px;" width="16" height="17" viewBox="0 0 16 17"><path d="M1,16V1H15V5H5V16Z" fill="none" stroke="#d0d0d0" stroke-width="1.2"/><path d="M7,1V3M10,1V3M13,1V3M1,7H3M1,10H3M1,13H3" stroke="#d0d0d0" stroke-width="1"/></svg><svg class="a" style="left:129px;top:213px;" width="16" height="16" viewBox="0 0 16 16"><rect x=".6" y=".6" width="14.8" height="14.8" fill="none" stroke="#d0d0d0" stroke-width="1.1"/><path d="M5.5,1V15M10.5,1V15M1,5.5H15M1,10.5H15" stroke="#d0d0d0" stroke-width="1.1"/></svg><svg class="a" style="left:159px;top:213px;" width="16" height="16" viewBox="0 0 16 16"><rect x=".6" y=".6" width="14.8" height="14.8" fill="#7a7a7a" stroke="#d0d0d0" stroke-width="1.1"/><path d="M1,3H15M1,6H15M1,9H15M1,12H15" stroke="#a8a8a8" stroke-width="1.5" stroke-dasharray="1.5 1.5"/></svg><div class="a" style="left:3px;top:237px;width:235px;height:1px;background:#494949;"></div><div class="t" style="left:10px;top:252px;font-size:10px;line-height:14px;color:#dcdcdc;font-weight:400;">Guides</div><div class="a" style="left:96px;top:247px;width:22px;height:21.5px;background:#2f2f2f;border-radius:2px"></div><svg class="a" style="left:99px;top:250px;" width="16" height="16" viewBox="0 0 16 16"><path d="M4.5,0V16M10.5,0V16M0,5H16M0,11H16" stroke="#fff" stroke-width="1.4"/></svg><svg class="a" style="left:128px;top:250px;" width="17" height="17" viewBox="0 0 17 17"><path d="M4.5,0V16M9.5,0V8M0,4.5H16M0,10H8" stroke="#d0d0d0" stroke-width="1.1"/><rect x="9.5" y="11" width="6.5" height="5.5" fill="#d0d0d0"/><path d="M11,11V9.5C11,7.5 14.5,7.5 14.5,9.5" fill="none" stroke="#d0d0d0" stroke-width="1.1"/></svg><div class="a" style="left:156px;top:247px;width:22px;height:21.5px;background:#2f2f2f;border-radius:2px"></div><svg class="a" style="left:159px;top:250px;" width="17" height="16" viewBox="0 0 17 16"><path d="M4.5,0V16M0,5H16" stroke="#fff" stroke-width="1.4"/><path d="M3,5 L8,2.5 V7.5Z" fill="#fff"/><path d="M11,8 L15,8 L12.5,11 L15,11 L10,16 L11.5,12 L9,12Z" fill="#fff"/></svg><div class="a" style="left:3px;top:275px;width:235px;height:1px;background:#494949;"></div><div class="t" style="left:10px;top:290.5px;font-size:10px;line-height:14px;color:#dcdcdc;font-weight:400;">Snap Options</div><div class="a" style="left:96px;top:285px;width:22px;height:21.5px;background:#2f2f2f;border-radius:2px"></div><svg class="a" style="left:99px;top:288px;" width="16" height="15" viewBox="0 0 16 15"><path d="M3.5,0V15" stroke="#fff" stroke-width="1.2"/><circle cx="3.5" cy="7" r="2" fill="#2f2f2f" stroke="#fff" stroke-width="1.1"/><path d="M8,3.5 H11 C16,3.5 16,10.5 11,10.5 H8" fill="none" stroke="#fff" stroke-width="2.4"/></svg><svg class="a" style="left:128px;top:288px;" width="17" height="15" viewBox="0 0 17 15"><path d="M2.5,0V15M6.5,0V15M0,3H8M0,7.5H8M0,12H8" stroke="#d0d0d0" stroke-width="1" stroke-dasharray="2 1"/><path d="M10,3.5 H12 C17,3.5 17,10.5 12,10.5 H10" fill="none" stroke="#d0d0d0" stroke-width="2.4"/></svg><div class="a" style="left:156px;top:285px;width:22px;height:21.5px;background:#2f2f2f;border-radius:2px"></div><svg class="a" style="left:159px;top:288px;" width="17" height="15" viewBox="0 0 17 15"><rect x="0" y="0" width="4" height="4" fill="#fff"/><rect x="0" y="5.5" width="4" height="4" fill="#fff"/><rect x="0" y="11" width="4" height="4" fill="#fff"/><path d="M7,3.5 H11 C16,3.5 16,10.5 11,10.5 H7" fill="none" stroke="#fff" stroke-width="2.4"/></svg><div class="a" style="left:3px;top:313px;width:235px;height:1px;background:#494949;"></div><div class="t" style="left:10px;top:325px;font-size:10px;line-height:14px;color:#dcdcdc;font-weight:400;">Preferences</div><div class="t" style="left:9px;top:352px;font-size:10px;line-height:14px;color:#dcdcdc;font-weight:400;letter-spacing:-.05px">Keyboard Increment:</div><div class="a" style="left:108px;top:348px;width:57px;height:19px;background:#454545;border-radius:2px"></div><div class="t" style="left:112.5px;top:350.5px;font-size:10px;line-height:14px;color:#f4f4f4;font-weight:400;">1 px</div><div class="a" style="left:13px;top:380.5px;width:12px;height:12px;background:transparent;border:1px solid #d0d0d0;border-radius:2px"></div><div class="t" style="left:28.5px;top:380px;font-size:10px;line-height:14px;color:#dcdcdc;font-weight:400;letter-spacing:-.12px">Use Preview Bounds</div><div class="a" style="left:13px;top:404.5px;width:12px;height:12px;background:transparent;border:1px solid #d0d0d0;border-radius:2px"></div><div class="t" style="left:28.5px;top:404px;font-size:10px;line-height:14px;color:#dcdcdc;font-weight:400;letter-spacing:-.12px">Scale Corners</div><div class="a" style="left:13px;top:428.5px;width:12px;height:12px;background:transparent;border:1px solid #d0d0d0;border-radius:2px"></div><div class="t" style="left:28.5px;top:428px;font-size:10px;line-height:14px;color:#dcdcdc;font-weight:400;letter-spacing:-.12px">Scale Strokes &amp; Effects</div><div class="a" style="left:3px;top:456px;width:235px;height:1px;background:#494949;"></div><div class="t" style="left:10px;top:473px;font-size:10px;line-height:14px;color:#dcdcdc;font-weight:400;">Quick Actions</div><div class="a" style="left:10px;top:498px;width:116px;height:20px;background:transparent;border:1px solid #6a6a6a;border-radius:3px"></div><div class="t" style="left:31px;top:502px;font-size:10px;line-height:14px;color:#f4f4f4;font-weight:700;letter-spacing:-.45px">Document Setup</div><div class="a" style="left:136px;top:498px;width:101px;height:20px;background:transparent;border:1px solid #6a6a6a;border-radius:3px"></div><div class="t" style="left:160px;top:502px;font-size:10px;line-height:14px;color:#f4f4f4;font-weight:700;letter-spacing:-.45px">Preferences</div></div>
<div class="a" style="left:167px;top:573px;width:241px;height:467px;background:#535353;border-left:1px solid #3c3c3c;border-right:1px solid #3c3c3c;border-top:1px solid #3c3c3c;border-radius:3px 3px 0 0;overflow:hidden;box-shadow:0 0 4px rgba(0,0,0,.35)"><div class="a" style="left:0px;top:0px;width:241px;height:14px;background:#424242;"></div><svg class="a" style="left:207.5px;top:3px;" width="10" height="7" viewBox="0 0 10 7"><path d="M4,0.5 L1,3.5 L4,6.5Z M9,0.5 L6,3.5 L9,6.5Z" fill="#c8c8c8"/></svg><svg class="a" style="left:227.5px;top:2.5px;" width="8" height="8" viewBox="0 0 8 8"><path d="M1,1 L7,7 M7,1 L1,7" stroke="#d0d0d0" stroke-width="1.8"/></svg><div class="a" style="left:0px;top:14px;width:241px;height:27px;background:#424242;"></div><div class="a" style="left:0px;top:14px;width:46px;height:28px;background:#535353;"></div><div class="t" style="left:8px;top:19.5px;font-size:10px;line-height:14px;color:#f0f0f0;font-weight:700;letter-spacing:-.35px">Layers</div><svg class="a" style="left:222px;top:21.5px;" width="12" height="10" viewBox="0 0 12 10"><path d="M0,1.5H12M0,5H12M0,8.5H12" stroke="#c8c8c8" stroke-width="1.2"/></svg><div class="a" style="left:0px;top:41px;width:241px;height:1px;background:#3e3e3e;"></div><div class="a" style="left:46px;top:41px;width:195px;height:1px;background:#3a3a3a;"></div><div class="a" style="left:5px;top:44px;width:228px;height:1px;background:#4a4a4a;"></div><div class="a" style="left:5px;top:47px;width:228px;height:20px;background:#4b6583;"></div><svg class="a" style="left:226px;top:47px;" width="7" height="6" viewBox="0 0 7 6"><path d="M0,0H7V6Z" fill="#e8e8e8"/></svg><div class="a" style="left:5px;top:67px;width:228px;height:1px;background:#4d4d4d;"></div><svg class="a" style="left:7.5px;top:52.5px;" width="13" height="9" viewBox="0 0 13 9"><path d="M0.5,4.5 C3,0.3 10,0.3 12.5,4.5 C10,8.7 3,8.7 0.5,4.5Z" fill="#d4d4d4"/><circle cx="6.5" cy="4.5" r="2.7" fill="#4b6583"/><circle cx="6.5" cy="4.5" r="1.4" fill="#d4d4d4"/></svg><svg class="a" style="left:31.5px;top:51.5px;" width="8" height="11" viewBox="0 0 8 11"><path d="M2,5 V3.2 C2,0.4 6,0.4 6,3.2 V5" fill="none" stroke="#d4d4d4" stroke-width="1.3"/><rect x="0.3" y="4.6" width="7.4" height="6" fill="#d4d4d4"/><rect x="3.3" y="6.3" width="1.4" height="2.6" fill="#4b6583"/></svg><div class="a" style="left:48px;top:47px;width:3.2px;height:21px;background:#f0a030;"></div><svg class="a" style="left:57.5px;top:52.5px;" width="7" height="9" viewBox="0 0 7 9"><path d="M1.5,1 L5.5,4.5 L1.5,8" fill="none" stroke="#e0e0e0" stroke-width="1.5"/></svg><svg class="a" style="left:77px;top:47.5px;" width="18" height="19" viewBox="0 0 18 19"><rect x=".5" y=".5" width="17" height="18" fill="#fff" stroke="#000"/><path d="M2,10 C5,6 7,13 10,10 C12,8 14,12 16,10" fill="none" stroke="#222" stroke-width="1.2"/></svg><div class="t" style="left:100px;top:51px;font-size:10px;line-height:14px;color:#f0f0f0;font-weight:400;">nose</div><svg class="a" style="left:203.5px;top:52.5px;" width="9" height="9" viewBox="0 0 9 9"><circle cx="4.5" cy="4.5" r="3.4" fill="none" stroke="#d4d4d4" stroke-width="1.3"/></svg><div class="a" style="left:5px;top:68px;width:228px;height:20px;background:#5a5553;"></div><div class="a" style="left:5px;top:88px;width:228px;height:1px;background:#4d4d4d;"></div><svg class="a" style="left:7.5px;top:73.5px;" width="13" height="9" viewBox="0 0 13 9"><path d="M0.5,4.5 C3,0.3 10,0.3 12.5,4.5 C10,8.7 3,8.7 0.5,4.5Z" fill="#d4d4d4"/><circle cx="6.5" cy="4.5" r="2.7" fill="#535353"/><circle cx="6.5" cy="4.5" r="1.4" fill="#d4d4d4"/></svg><svg class="a" style="left:31.5px;top:72.5px;" width="8" height="11" viewBox="0 0 8 11"><path d="M2,5 V3.2 C2,0.4 6,0.4 6,3.2 V5" fill="none" stroke="#d4d4d4" stroke-width="1.3"/><rect x="0.3" y="4.6" width="7.4" height="6" fill="#d4d4d4"/><rect x="3.3" y="6.3" width="1.4" height="2.6" fill="#535353"/></svg><div class="a" style="left:48px;top:67px;width:3.2px;height:22px;background:#9040e0;"></div><svg class="a" style="left:57.5px;top:73.5px;" width="7" height="9" viewBox="0 0 7 9"><path d="M1.5,1 L5.5,4.5 L1.5,8" fill="none" stroke="#e0e0e0" stroke-width="1.5"/></svg><svg class="a" style="left:77px;top:68.5px;" width="18" height="19" viewBox="0 0 18 19"><rect x=".5" y=".5" width="17" height="18" fill="#fff" stroke="#000"/><path d="M2,8 C6,8 10,12 16,12" fill="none" stroke="#223" stroke-width="1.2"/></svg><div class="t" style="left:100px;top:72px;font-size:10px;line-height:14px;color:#e4e4e4;font-weight:400;">mouth</div><svg class="a" style="left:203.5px;top:73.5px;" width="9" height="9" viewBox="0 0 9 9"><circle cx="4.5" cy="4.5" r="3.4" fill="none" stroke="#d4d4d4" stroke-width="1.3"/></svg><div class="a" style="left:5px;top:109px;width:228px;height:1px;background:#4d4d4d;"></div><svg class="a" style="left:7.5px;top:94.5px;" width="13" height="9" viewBox="0 0 13 9"><path d="M0.5,4.5 C3,0.3 10,0.3 12.5,4.5 C10,8.7 3,8.7 0.5,4.5Z" fill="#d4d4d4"/><circle cx="6.5" cy="4.5" r="2.7" fill="#535353"/><circle cx="6.5" cy="4.5" r="1.4" fill="#d4d4d4"/></svg><svg class="a" style="left:31.5px;top:93.5px;" width="8" height="11" viewBox="0 0 8 11"><path d="M2,5 V3.2 C2,0.4 6,0.4 6,3.2 V5" fill="none" stroke="#d4d4d4" stroke-width="1.3"/><rect x="0.3" y="4.6" width="7.4" height="6" fill="#d4d4d4"/><rect x="3.3" y="6.3" width="1.4" height="2.6" fill="#535353"/></svg><div class="a" style="left:48px;top:88px;width:3.2px;height:22px;background:#a04000;"></div><svg class="a" style="left:57.5px;top:94.5px;" width="7" height="9" viewBox="0 0 7 9"><path d="M1.5,1 L5.5,4.5 L1.5,8" fill="none" stroke="#e0e0e0" stroke-width="1.5"/></svg><svg class="a" style="left:77px;top:89.5px;" width="18" height="19" viewBox="0 0 18 19"><rect x=".5" y=".5" width="17" height="18" fill="#fff" stroke="#000"/><path d="M2,8 L8,9 M10,10 L16,9" stroke="#888" stroke-width="1"/></svg><div class="t" style="left:100px;top:93px;font-size:10px;line-height:14px;color:#e4e4e4;font-weight:400;">Brows</div><svg class="a" style="left:203.5px;top:94.5px;" width="9" height="9" viewBox="0 0 9 9"><circle cx="4.5" cy="4.5" r="3.4" fill="none" stroke="#d4d4d4" stroke-width="1.3"/></svg><div class="a" style="left:5px;top:130px;width:228px;height:1px;background:#4d4d4d;"></div><svg class="a" style="left:7.5px;top:115.5px;" width="13" height="9" viewBox="0 0 13 9"><path d="M0.5,4.5 C3,0.3 10,0.3 12.5,4.5 C10,8.7 3,8.7 0.5,4.5Z" fill="#d4d4d4"/><circle cx="6.5" cy="4.5" r="2.7" fill="#535353"/><circle cx="6.5" cy="4.5" r="1.4" fill="#d4d4d4"/></svg><svg class="a" style="left:31.5px;top:114.5px;" width="8" height="11" viewBox="0 0 8 11"><path d="M2,5 V3.2 C2,0.4 6,0.4 6,3.2 V5" fill="none" stroke="#d4d4d4" stroke-width="1.3"/><rect x="0.3" y="4.6" width="7.4" height="6" fill="#d4d4d4"/><rect x="3.3" y="6.3" width="1.4" height="2.6" fill="#535353"/></svg><div class="a" style="left:48px;top:109px;width:3.2px;height:22px;background:#5a5ad8;"></div><svg class="a" style="left:57.5px;top:115.5px;" width="7" height="9" viewBox="0 0 7 9"><path d="M1.5,1 L5.5,4.5 L1.5,8" fill="none" stroke="#e0e0e0" stroke-width="1.5"/></svg><svg class="a" style="left:77px;top:110.5px;" width="18" height="19" viewBox="0 0 18 19"><rect x=".5" y=".5" width="17" height="18" fill="#fff" stroke="#000"/><ellipse cx="8" cy="8" rx="5" ry="2.5" fill="#222"/><path d="M2,10 H16" stroke="#666" stroke-width=".8"/></svg><div class="t" style="left:100px;top:114px;font-size:10px;line-height:14px;color:#e4e4e4;font-weight:400;">RightEye</div><svg class="a" style="left:203.5px;top:115.5px;" width="9" height="9" viewBox="0 0 9 9"><circle cx="4.5" cy="4.5" r="3.4" fill="none" stroke="#d4d4d4" stroke-width="1.3"/></svg><div class="a" style="left:5px;top:151px;width:228px;height:1px;background:#4d4d4d;"></div><svg class="a" style="left:7.5px;top:136.5px;" width="13" height="9" viewBox="0 0 13 9"><path d="M0.5,4.5 C3,0.3 10,0.3 12.5,4.5 C10,8.7 3,8.7 0.5,4.5Z" fill="#d4d4d4"/><circle cx="6.5" cy="4.5" r="2.7" fill="#535353"/><circle cx="6.5" cy="4.5" r="1.4" fill="#d4d4d4"/></svg><svg class="a" style="left:31.5px;top:135.5px;" width="8" height="11" viewBox="0 0 8 11"><path d="M2,5 V3.2 C2,0.4 6,0.4 6,3.2 V5" fill="none" stroke="#d4d4d4" stroke-width="1.3"/><rect x="0.3" y="4.6" width="7.4" height="6" fill="#d4d4d4"/><rect x="3.3" y="6.3" width="1.4" height="2.6" fill="#535353"/></svg><div class="a" style="left:48px;top:130px;width:3.2px;height:22px;background:#50f050;"></div><svg class="a" style="left:57.5px;top:136.5px;" width="7" height="9" viewBox="0 0 7 9"><path d="M1.5,1 L5.5,4.5 L1.5,8" fill="none" stroke="#e0e0e0" stroke-width="1.5"/></svg><svg class="a" style="left:77px;top:131.5px;" width="18" height="19" viewBox="0 0 18 19"><rect x=".5" y=".5" width="17" height="18" fill="#fff" stroke="#000"/><ellipse cx="7" cy="9" rx="3" ry="1.6" fill="#111"/></svg><div class="t" style="left:100px;top:135px;font-size:10px;line-height:14px;color:#e4e4e4;font-weight:400;">LeftEye</div><svg class="a" style="left:203.5px;top:136.5px;" width="9" height="9" viewBox="0 0 9 9"><circle cx="4.5" cy="4.5" r="3.4" fill="none" stroke="#d4d4d4" stroke-width="1.3"/></svg><div class="a" style="left:5px;top:172px;width:228px;height:1px;background:#4d4d4d;"></div><svg class="a" style="left:7.5px;top:157.5px;" width="13" height="9" viewBox="0 0 13 9"><path d="M0.5,4.5 C3,0.3 10,0.3 12.5,4.5 C10,8.7 3,8.7 0.5,4.5Z" fill="#d4d4d4"/><circle cx="6.5" cy="4.5" r="2.7" fill="#535353"/><circle cx="6.5" cy="4.5" r="1.4" fill="#d4d4d4"/></svg><svg class="a" style="left:31.5px;top:156.5px;" width="8" height="11" viewBox="0 0 8 11"><path d="M2,5 V3.2 C2,0.4 6,0.4 6,3.2 V5" fill="none" stroke="#d4d4d4" stroke-width="1.3"/><rect x="0.3" y="4.6" width="7.4" height="6" fill="#d4d4d4"/><rect x="3.3" y="6.3" width="1.4" height="2.6" fill="#535353"/></svg><div class="a" style="left:48px;top:151px;width:3.2px;height:22px;background:#109090;"></div><svg class="a" style="left:57.5px;top:157.5px;" width="7" height="9" viewBox="0 0 7 9"><path d="M1.5,1 L5.5,4.5 L1.5,8" fill="none" stroke="#e0e0e0" stroke-width="1.5"/></svg><svg class="a" style="left:77px;top:152.5px;" width="18" height="19" viewBox="0 0 18 19"><rect x=".5" y=".5" width="17" height="18" fill="#fff" stroke="#000"/><path d="M7,3 C11,6 11,13 8,16 C6,12 6,8 7,3Z" fill="#d8a070"/><path d="M8,3 C10,7 10,12 9,16" stroke="#222" stroke-width="1" fill="none"/></svg><div class="t" style="left:100px;top:156px;font-size:10px;line-height:14px;color:#e4e4e4;font-weight:400;">Ear</div><svg class="a" style="left:203.5px;top:157.5px;" width="9" height="9" viewBox="0 0 9 9"><circle cx="4.5" cy="4.5" r="3.4" fill="none" stroke="#d4d4d4" stroke-width="1.3"/></svg><div class="a" style="left:5px;top:193px;width:228px;height:1px;background:#4d4d4d;"></div><svg class="a" style="left:7.5px;top:178.5px;" width="13" height="9" viewBox="0 0 13 9"><path d="M0.5,4.5 C3,0.3 10,0.3 12.5,4.5 C10,8.7 3,8.7 0.5,4.5Z" fill="#d4d4d4"/><circle cx="6.5" cy="4.5" r="2.7" fill="#535353"/><circle cx="6.5" cy="4.5" r="1.4" fill="#d4d4d4"/></svg><svg class="a" style="left:31.5px;top:177.5px;" width="8" height="11" viewBox="0 0 8 11"><path d="M2,5 V3.2 C2,0.4 6,0.4 6,3.2 V5" fill="none" stroke="#d4d4d4" stroke-width="1.3"/><rect x="0.3" y="4.6" width="7.4" height="6" fill="#d4d4d4"/><rect x="3.3" y="6.3" width="1.4" height="2.6" fill="#535353"/></svg><div class="a" style="left:48px;top:172px;width:3.2px;height:22px;background:#000000;"></div><svg class="a" style="left:57.5px;top:178.5px;" width="7" height="9" viewBox="0 0 7 9"><path d="M1.5,1 L5.5,4.5 L1.5,8" fill="none" stroke="#e0e0e0" stroke-width="1.5"/></svg><svg class="a" style="left:77px;top:173.5px;" width="18" height="19" viewBox="0 0 18 19"><rect x=".5" y=".5" width="17" height="18" fill="#fff" stroke="#000"/><path d="M6,5 L12,3 L14,8 L11,16 L6,13 Z M7,7 L11,6 L12,10 L9,13Z" fill="none" stroke="#444" stroke-width=".8"/></svg><div class="t" style="left:100px;top:177px;font-size:10px;line-height:14px;color:#e4e4e4;font-weight:400;">Head</div><svg class="a" style="left:203.5px;top:178.5px;" width="9" height="9" viewBox="0 0 9 9"><circle cx="4.5" cy="4.5" r="3.4" fill="none" stroke="#d4d4d4" stroke-width="1.3"/></svg><div class="a" style="left:5px;top:214px;width:228px;height:1px;background:#4d4d4d;"></div><svg class="a" style="left:7.5px;top:199.5px;" width="13" height="9" viewBox="0 0 13 9"><path d="M0.5,4.5 C3,0.3 10,0.3 12.5,4.5 C10,8.7 3,8.7 0.5,4.5Z" fill="#d4d4d4"/><circle cx="6.5" cy="4.5" r="2.7" fill="#535353"/><circle cx="6.5" cy="4.5" r="1.4" fill="#d4d4d4"/></svg><div class="a" style="left:48px;top:193px;width:3.2px;height:22px;background:#000090;"></div><svg class="a" style="left:58.5px;top:200.5px;" width="9" height="7" viewBox="0 0 9 7"><path d="M1,1.5 L4.5,5.5 L8,1.5" fill="none" stroke="#e0e0e0" stroke-width="1.5"/></svg><svg class="a" style="left:77px;top:194.5px;" width="18" height="19" viewBox="0 0 18 19"><rect x=".5" y=".5" width="17" height="18" fill="#fff" stroke="#000"/><path d="M10,3 L14,6 L13,12 L9,16 L7,10 Z" fill="#d8a888"/><path d="M8,8 L10,7 L9,14Z" fill="#e8c8a8"/></svg><div class="t" style="left:100px;top:198px;font-size:10px;line-height:14px;color:#e4e4e4;font-weight:400;">HerdColor</div><svg class="a" style="left:203.5px;top:199.5px;" width="9" height="9" viewBox="0 0 9 9"><circle cx="4.5" cy="4.5" r="3.4" fill="none" stroke="#d4d4d4" stroke-width="1.3"/></svg><div class="a" style="left:5px;top:235px;width:228px;height:1px;background:#4d4d4d;"></div><svg class="a" style="left:7.5px;top:220.5px;" width="13" height="9" viewBox="0 0 13 9"><path d="M0.5,4.5 C3,0.3 10,0.3 12.5,4.5 C10,8.7 3,8.7 0.5,4.5Z" fill="#d4d4d4"/><circle cx="6.5" cy="4.5" r="2.7" fill="#535353"/><circle cx="6.5" cy="4.5" r="1.4" fill="#d4d4d4"/></svg><svg class="a" style="left:31.5px;top:219.5px;" width="8" height="11" viewBox="0 0 8 11"><path d="M2,5 V3.2 C2,0.4 6,0.4 6,3.2 V5" fill="none" stroke="#d4d4d4" stroke-width="1.3"/><rect x="0.3" y="4.6" width="7.4" height="6" fill="#d4d4d4"/><rect x="3.3" y="6.3" width="1.4" height="2.6" fill="#535353"/></svg><div class="a" style="left:48px;top:214px;width:3.2px;height:22px;background:#000090;"></div><svg class="a" style="left:100.5px;top:215.5px;" width="18" height="19" viewBox="0 0 18 19"><rect x=".5" y=".5" width="17" height="18" fill="#fff" stroke="#000"/></svg><div class="t" style="left:123.5px;top:219px;font-size:10px;line-height:14px;color:#e4e4e4;font-weight:400;">&lt;Path&gt;</div><svg class="a" style="left:203.5px;top:220.5px;" width="9" height="9" viewBox="0 0 9 9"><circle cx="4.5" cy="4.5" r="3.4" fill="none" stroke="#d4d4d4" stroke-width="1.3"/></svg><div class="a" style="left:5px;top:256px;width:228px;height:1px;background:#4d4d4d;"></div><svg class="a" style="left:7.5px;top:241.5px;" width="13" height="9" viewBox="0 0 13 9"><path d="M0.5,4.5 C3,0.3 10,0.3 12.5,4.5 C10,8.7 3,8.7 0.5,4.5Z" fill="#d4d4d4"/><circle cx="6.5" cy="4.5" r="2.7" fill="#535353"/><circle cx="6.5" cy="4.5" r="1.4" fill="#d4d4d4"/></svg><svg class="a" style="left:31.5px;top:240.5px;" width="8" height="11" viewBox="0 0 8 11"><path d="M2,5 V3.2 C2,0.4 6,0.4 6,3.2 V5" fill="none" stroke="#d4d4d4" stroke-width="1.3"/><rect x="0.3" y="4.6" width="7.4" height="6" fill="#d4d4d4"/><rect x="3.3" y="6.3" width="1.4" height="2.6" fill="#535353"/></svg><div class="a" style="left:48px;top:235px;width:3.2px;height:22px;background:#000090;"></div><svg class="a" style="left:100.5px;top:236.5px;" width="18" height="19" viewBox="0 0 18 19"><rect x=".5" y=".5" width="17" height="18" fill="#fff" stroke="#000"/><path d="M3,12 C7,10 12,10 15,7 L15,13 L3,14Z" fill="#f1ece4"/></svg><div class="t" style="left:123.5px;top:240px;font-size:10px;line-height:14px;color:#e4e4e4;font-weight:400;">&lt;Path&gt;</div><svg class="a" style="left:203.5px;top:241.5px;" width="9" height="9" viewBox="0 0 9 9"><circle cx="4.5" cy="4.5" r="3.4" fill="none" stroke="#d4d4d4" stroke-width="1.3"/></svg><div class="a" style="left:5px;top:277px;width:228px;height:1px;background:#4d4d4d;"></div><svg class="a" style="left:7.5px;top:262.5px;" width="13" height="9" viewBox="0 0 13 9"><path d="M0.5,4.5 C3,0.3 10,0.3 12.5,4.5 C10,8.7 3,8.7 0.5,4.5Z" fill="#d4d4d4"/><circle cx="6.5" cy="4.5" r="2.7" fill="#535353"/><circle cx="6.5" cy="4.5" r="1.4" fill="#d4d4d4"/></svg><svg class="a" style="left:31.5px;top:261.5px;" width="8" height="11" viewBox="0 0 8 11"><path d="M2,5 V3.2 C2,0.4 6,0.4 6,3.2 V5" fill="none" stroke="#d4d4d4" stroke-width="1.3"/><rect x="0.3" y="4.6" width="7.4" height="6" fill="#d4d4d4"/><rect x="3.3" y="6.3" width="1.4" height="2.6" fill="#535353"/></svg><div class="a" style="left:48px;top:256px;width:3.2px;height:22px;background:#000090;"></div><svg class="a" style="left:100.5px;top:257.5px;" width="18" height="19" viewBox="0 0 18 19"><rect x=".5" y=".5" width="17" height="18" fill="#fff" stroke="#000"/><path d="M3,8 H15 V13 C10,15 6,14 3,12Z" fill="#f1ece4"/></svg><div class="t" style="left:123.5px;top:261px;font-size:10px;line-height:14px;color:#e4e4e4;font-weight:400;">&lt;Path&gt;</div><svg class="a" style="left:203.5px;top:262.5px;" width="9" height="9" viewBox="0 0 9 9"><circle cx="4.5" cy="4.5" r="3.4" fill="none" stroke="#d4d4d4" stroke-width="1.3"/></svg><div class="a" style="left:5px;top:298px;width:228px;height:1px;background:#4d4d4d;"></div><svg class="a" style="left:7.5px;top:283.5px;" width="13" height="9" viewBox="0 0 13 9"><path d="M0.5,4.5 C3,0.3 10,0.3 12.5,4.5 C10,8.7 3,8.7 0.5,4.5Z" fill="#d4d4d4"/><circle cx="6.5" cy="4.5" r="2.7" fill="#535353"/><circle cx="6.5" cy="4.5" r="1.4" fill="#d4d4d4"/></svg><svg class="a" style="left:31.5px;top:282.5px;" width="8" height="11" viewBox="0 0 8 11"><path d="M2,5 V3.2 C2,0.4 6,0.4 6,3.2 V5" fill="none" stroke="#d4d4d4" stroke-width="1.3"/><rect x="0.3" y="4.6" width="7.4" height="6" fill="#d4d4d4"/><rect x="3.3" y="6.3" width="1.4" height="2.6" fill="#535353"/></svg><div class="a" style="left:48px;top:277px;width:3.2px;height:22px;background:#000090;"></div><svg class="a" style="left:100.5px;top:278.5px;" width="18" height="19" viewBox="0 0 18 19"><rect x=".5" y=".5" width="17" height="18" fill="#fff" stroke="#000"/><path d="M10,3 L12,3 L9,16 L7,16Z" fill="#ececec"/></svg><div class="t" style="left:123.5px;top:282px;font-size:10px;line-height:14px;color:#e4e4e4;font-weight:400;">&lt;Path&gt;</div><svg class="a" style="left:203.5px;top:283.5px;" width="9" height="9" viewBox="0 0 9 9"><circle cx="4.5" cy="4.5" r="3.4" fill="none" stroke="#d4d4d4" stroke-width="1.3"/></svg><div class="a" style="left:5px;top:319px;width:228px;height:1px;background:#4d4d4d;"></div><svg class="a" style="left:7.5px;top:304.5px;" width="13" height="9" viewBox="0 0 13 9"><path d="M0.5,4.5 C3,0.3 10,0.3 12.5,4.5 C10,8.7 3,8.7 0.5,4.5Z" fill="#d4d4d4"/><circle cx="6.5" cy="4.5" r="2.7" fill="#535353"/><circle cx="6.5" cy="4.5" r="1.4" fill="#d4d4d4"/></svg><svg class="a" style="left:31.5px;top:303.5px;" width="8" height="11" viewBox="0 0 8 11"><path d="M2,5 V3.2 C2,0.4 6,0.4 6,3.2 V5" fill="none" stroke="#d4d4d4" stroke-width="1.3"/><rect x="0.3" y="4.6" width="7.4" height="6" fill="#d4d4d4"/><rect x="3.3" y="6.3" width="1.4" height="2.6" fill="#535353"/></svg><svg class="a" style="left:100.5px;top:299.5px;" width="18" height="19" viewBox="0 0 18 19"><rect x=".5" y=".5" width="17" height="18" fill="#fff" stroke="#000"/><path d="M9,3 L11,3 L8,16 L6,16Z" fill="#ececec"/></svg><div class="t" style="left:123.5px;top:303px;font-size:10px;line-height:14px;color:#e4e4e4;font-weight:400;">&lt;Path&gt;</div><svg class="a" style="left:203.5px;top:304.5px;" width="9" height="9" viewBox="0 0 9 9"><circle cx="4.5" cy="4.5" r="3.4" fill="none" stroke="#d4d4d4" stroke-width="1.3"/></svg><div class="a" style="left:5px;top:340px;width:228px;height:1px;background:#4d4d4d;"></div><svg class="a" style="left:7.5px;top:325.5px;" width="13" height="9" viewBox="0 0 13 9"><path d="M0.5,4.5 C3,0.3 10,0.3 12.5,4.5 C10,8.7 3,8.7 0.5,4.5Z" fill="#d4d4d4"/><circle cx="6.5" cy="4.5" r="2.7" fill="#535353"/><circle cx="6.5" cy="4.5" r="1.4" fill="#d4d4d4"/></svg><svg class="a" style="left:80.5px;top:325.5px;" width="7" height="9" viewBox="0 0 7 9"><path d="M1.5,1 L5.5,4.5 L1.5,8" fill="none" stroke="#e0e0e0" stroke-width="1.5"/></svg><svg class="a" style="left:100.5px;top:320.5px;" width="18" height="19" viewBox="0 0 18 19"><rect x=".5" y=".5" width="17" height="18" fill="#fff" stroke="#000"/><path d="M7,3 C10,6 8,9 11,12 L9,16 L6,9Z" fill="#e2cdbf"/></svg><div class="t" style="left:123.5px;top:324px;font-size:10px;line-height:14px;color:#e4e4e4;font-weight:400;">darksh...</div><svg class="a" style="left:203.5px;top:325.5px;" width="9" height="9" viewBox="0 0 9 9"><circle cx="4.5" cy="4.5" r="3.4" fill="none" stroke="#d4d4d4" stroke-width="1.3"/></svg><div class="a" style="left:5px;top:361px;width:228px;height:1px;background:#4d4d4d;"></div><svg class="a" style="left:7.5px;top:346.5px;" width="13" height="9" viewBox="0 0 13 9"><path d="M0.5,4.5 C3,0.3 10,0.3 12.5,4.5 C10,8.7 3,8.7 0.5,4.5Z" fill="#d4d4d4"/><circle cx="6.5" cy="4.5" r="2.7" fill="#535353"/><circle cx="6.5" cy="4.5" r="1.4" fill="#d4d4d4"/></svg><svg class="a" style="left:31.5px;top:345.5px;" width="8" height="11" viewBox="0 0 8 11"><path d="M2,5 V3.2 C2,0.4 6,0.4 6,3.2 V5" fill="none" stroke="#d4d4d4" stroke-width="1.3"/><rect x="0.3" y="4.6" width="7.4" height="6" fill="#d4d4d4"/><rect x="3.3" y="6.3" width="1.4" height="2.6" fill="#535353"/></svg><svg class="a" style="left:80.5px;top:346.5px;" width="7" height="9" viewBox="0 0 7 9"><path d="M1.5,1 L5.5,4.5 L1.5,8" fill="none" stroke="#e0e0e0" stroke-width="1.5"/></svg><svg class="a" style="left:100.5px;top:341.5px;" width="18" height="19" viewBox="0 0 18 19"><rect x=".5" y=".5" width="17" height="18" fill="#fff" stroke="#000"/><path d="M9,4 C12,6 12,12 9,15 C6,12 6,8 9,4Z" fill="#e8c4a8"/></svg><div class="t" style="left:123.5px;top:345px;font-size:10px;line-height:14px;color:#e4e4e4;font-weight:400;">shadow</div><svg class="a" style="left:203.5px;top:346.5px;" width="9" height="9" viewBox="0 0 9 9"><circle cx="4.5" cy="4.5" r="3.4" fill="none" stroke="#d4d4d4" stroke-width="1.3"/></svg><div class="a" style="left:5px;top:382px;width:228px;height:1px;background:#4d4d4d;"></div><svg class="a" style="left:7.5px;top:367.5px;" width="13" height="9" viewBox="0 0 13 9"><path d="M0.5,4.5 C3,0.3 10,0.3 12.5,4.5 C10,8.7 3,8.7 0.5,4.5Z" fill="#d4d4d4"/><circle cx="6.5" cy="4.5" r="2.7" fill="#535353"/><circle cx="6.5" cy="4.5" r="1.4" fill="#d4d4d4"/></svg><svg class="a" style="left:31.5px;top:366.5px;" width="8" height="11" viewBox="0 0 8 11"><path d="M2,5 V3.2 C2,0.4 6,0.4 6,3.2 V5" fill="none" stroke="#d4d4d4" stroke-width="1.3"/><rect x="0.3" y="4.6" width="7.4" height="6" fill="#d4d4d4"/><rect x="3.3" y="6.3" width="1.4" height="2.6" fill="#535353"/></svg><svg class="a" style="left:80.5px;top:367.5px;" width="7" height="9" viewBox="0 0 7 9"><path d="M1.5,1 L5.5,4.5 L1.5,8" fill="none" stroke="#e0e0e0" stroke-width="1.5"/></svg><svg class="a" style="left:100.5px;top:362.5px;" width="18" height="19" viewBox="0 0 18 19"><rect x=".5" y=".5" width="17" height="18" fill="#fff" stroke="#000"/><ellipse cx="11" cy="10" rx="4" ry="5" fill="#f0c8a4"/></svg><div class="t" style="left:123.5px;top:366px;font-size:10px;line-height:14px;color:#e4e4e4;font-weight:400;">BlobBr...</div><svg class="a" style="left:203.5px;top:367.5px;" width="9" height="9" viewBox="0 0 9 9"><circle cx="4.5" cy="4.5" r="3.4" fill="none" stroke="#d4d4d4" stroke-width="1.3"/></svg><div class="a" style="left:5px;top:403px;width:228px;height:1px;background:#4d4d4d;"></div><svg class="a" style="left:8px;top:388px;" width="12" height="10" viewBox="0 0 12 10"><rect x=".6" y=".6" width="10.8" height="8.8" fill="none" stroke="#d4d4d4" stroke-width="1.2"/><rect x="3" y="3" width="6" height="4" fill="#d4d4d4"/></svg><svg class="a" style="left:31.5px;top:387.5px;" width="8" height="11" viewBox="0 0 8 11"><path d="M2,5 V3.2 C2,0.4 6,0.4 6,3.2 V5" fill="none" stroke="#d4d4d4" stroke-width="1.3"/><rect x="0.3" y="4.6" width="7.4" height="6" fill="#d4d4d4"/><rect x="3.3" y="6.3" width="1.4" height="2.6" fill="#535353"/></svg><svg class="a" style="left:58.5px;top:389.5px;" width="9" height="7" viewBox="0 0 9 7"><path d="M1,1.5 L4.5,5.5 L8,1.5" fill="none" stroke="#e0e0e0" stroke-width="1.5"/></svg><svg class="a" style="left:77px;top:383.5px;" width="18" height="19" viewBox="0 0 18 19"><rect x=".5" y=".5" width="17" height="18" fill="#fff" stroke="#000"/><rect x="1" y="1" width="16" height="17" fill="#f4f4f4"/><path d="M1,18 L4,11 L8,9 L13,11 L17,18Z" fill="#181818"/><ellipse cx="9" cy="8" rx="3" ry="3.6" fill="#c89070"/><path d="M6,5 L12,4 L12,7 L6,7Z" fill="#2a2a2a"/><path d="M2,2 L7,5" stroke="#555" stroke-width="2"/></svg><div class="t" style="left:100px;top:387px;font-size:10px;line-height:14px;color:#e4e4e4;font-weight:400;font-style:italic;">Template Ka...</div><svg class="a" style="left:203.5px;top:388.5px;" width="9" height="9" viewBox="0 0 9 9"><circle cx="4.5" cy="4.5" r="3.4" fill="none" stroke="#d4d4d4" stroke-width="1.3"/></svg><div class="a" style="left:5px;top:424px;width:228px;height:1px;background:#4d4d4d;"></div><svg class="a" style="left:7.5px;top:409.5px;" width="13" height="9" viewBox="0 0 13 9"><path d="M0.5,4.5 C3,0.3 10,0.3 12.5,4.5 C10,8.7 3,8.7 0.5,4.5Z" fill="#d4d4d4"/><circle cx="6.5" cy="4.5" r="2.7" fill="#535353"/><circle cx="6.5" cy="4.5" r="1.4" fill="#d4d4d4"/></svg><svg class="a" style="left:31.5px;top:408.5px;" width="8" height="11" viewBox="0 0 8 11"><path d="M2,5 V3.2 C2,0.4 6,0.4 6,3.2 V5" fill="none" stroke="#7a7a7a" stroke-width="1.3"/><rect x="0.3" y="4.6" width="7.4" height="6" fill="#7a7a7a"/><rect x="3.3" y="6.3" width="1.4" height="2.6" fill="#535353"/></svg><svg class="a" style="left:100.5px;top:404.5px;" width="18" height="19" viewBox="0 0 18 19"><rect x=".5" y=".5" width="17" height="18" fill="#fff" stroke="#000"/><rect x="1" y="1" width="16" height="17" fill="#f4f4f4"/><path d="M1,18 L4,11 L8,9 L13,11 L17,18Z" fill="#181818"/><ellipse cx="9" cy="8" rx="3" ry="3.6" fill="#c89070"/><path d="M6,5 L12,4 L12,7 L6,7Z" fill="#2a2a2a"/><path d="M2,2 L7,5" stroke="#555" stroke-width="2"/></svg><div class="t" style="left:123.5px;top:408px;font-size:10px;line-height:14px;color:#e4e4e4;font-weight:400;">&lt;Linke...</div><svg class="a" style="left:203.5px;top:409.5px;" width="9" height="9" viewBox="0 0 9 9"><circle cx="4.5" cy="4.5" r="3.4" fill="none" stroke="#d4d4d4" stroke-width="1.3"/></svg><div class="a" style="left:26px;top:47px;width:1px;height:378px;background:rgba(70,70,70,.35);"></div><div class="a" style="left:43px;top:47px;width:1px;height:378px;background:rgba(70,70,70,.35);"></div><div class="a" style="left:196px;top:47px;width:1px;height:378px;background:rgba(70,70,70,.35);"></div><div class="a" style="left:233px;top:44px;width:1px;height:422px;background:#4a4a4a;"></div><div class="a" style="left:5px;top:44px;width:1px;height:422px;background:#4a4a4a;"></div></div>
<div class="a" style="left:771px;top:587px;width:242px;height:383px;background:#535353;border:1px solid #3a3a3a;border-radius:3px;overflow:hidden;box-shadow:0 0 4px rgba(0,0,0,.4)"><div class="a" style="left:0px;top:0px;width:242px;height:12px;background:#424242;"></div><svg class="a" style="left:208.5px;top:2px;" width="10" height="7" viewBox="0 0 10 7"><path d="M4,0.5 L1,3.5 L4,6.5Z M9,0.5 L6,3.5 L9,6.5Z" fill="#c8c8c8"/></svg><svg class="a" style="left:228px;top:1.5px;" width="8" height="8" viewBox="0 0 8 8"><path d="M1,1 L7,7 M7,1 L1,7" stroke="#d0d0d0" stroke-width="1.8"/></svg><div class="a" style="left:0px;top:12px;width:242px;height:27px;background:#424242;"></div><div class="a" style="left:0px;top:12px;width:73px;height:28px;background:#535353;"></div><div class="t" style="left:9px;top:18px;font-size:10px;line-height:14px;color:#f0f0f0;font-weight:700;letter-spacing:-.3px">Appearance</div><svg class="a" style="left:222.5px;top:20px;" width="12" height="10" viewBox="0 0 12 10"><path d="M0,1.5H12M0,5H12M0,8.5H12" stroke="#c8c8c8" stroke-width="1.2"/></svg><div class="a" style="left:73px;top:39px;width:169px;height:1px;background:#3a3a3a;"></div><div class="a" style="left:6px;top:45px;width:229px;height:305px;background:transparent;border:1px solid #4d4d4d"></div><div class="a" style="left:7px;top:70.5px;width:227px;height:1px;background:#4d4d4d;"></div><div class="a" style="left:7px;top:95.5px;width:227px;height:1px;background:#4d4d4d;"></div><div class="a" style="left:7px;top:120.5px;width:227px;height:1px;background:#4d4d4d;"></div><div class="a" style="left:7px;top:145.5px;width:227px;height:1px;background:#4d4d4d;"></div><div class="a" style="left:7px;top:170.5px;width:227px;height:1px;background:#4d4d4d;"></div><div class="a" style="left:7px;top:195.5px;width:227px;height:1px;background:#4d4d4d;"></div><div class="a" style="left:30px;top:71px;width:1px;height:125px;background:#4d4d4d;"></div><div class="a" style="left:9.5px;top:49.5px;width:18px;height:18px;background:#fff;border:1px solid #2a2a2a;box-shadow:inset 0 0 0 1px #fff, inset 0 0 0 2px #d0d0d0"></div><div class="t" style="left:56px;top:52.5px;font-size:10px;line-height:14px;color:#e8e8e8;font-weight:700;letter-spacing:-.1px">No Selection</div><svg class="a" style="left:10.5px;top:78.5px;" width="13" height="9" viewBox="0 0 13 9"><path d="M0.5,4.5 C3,0.3 10,0.3 12.5,4.5 C10,8.7 3,8.7 0.5,4.5Z" fill="#d4d4d4"/><circle cx="6.5" cy="4.5" r="2.7" fill="#535353"/><circle cx="6.5" cy="4.5" r="1.4" fill="#d4d4d4"/></svg><svg class="a" style="left:36.5px;top:79.5px;" width="9" height="7" viewBox="0 0 9 7"><path d="M1,1.5 L4.5,5.5 L8,1.5" fill="none" stroke="#e0e0e0" stroke-width="1.5"/></svg><div class="t" style="left:56px;top:77.5px;font-size:10px;line-height:13px;height:14px;color:#f0f0f0;letter-spacing:-.2px;border-bottom:1px dotted #c4c4c4">Stroke:</div><div class="a" style="left:99px;top:75px;width:17px;height:17px;background:#000;border:1px solid #fff;box-shadow:inset 0 0 0 1px #fff, inset 0 0 0 3px #535353,inset 0 0 0 9px #000"></div><div class="t" style="left:129.5px;top:77.5px;font-size:10px;line-height:14px;color:#f0f0f0;font-weight:400;">1 pt&nbsp;&nbsp;Inside</div><svg class="a" style="left:10.5px;top:103.5px;" width="13" height="9" viewBox="0 0 13 9"><path d="M0.5,4.5 C3,0.3 10,0.3 12.5,4.5 C10,8.7 3,8.7 0.5,4.5Z" fill="#636363"/><circle cx="6.5" cy="4.5" r="2.7" fill="#535353"/><circle cx="6.5" cy="4.5" r="1.4" fill="#636363"/></svg><div class="t" style="left:79px;top:102.5px;font-size:10px;line-height:13px;height:14px;color:#f0f0f0;letter-spacing:-.2px;border-bottom:1px dotted #c4c4c4">Opacity:</div><div class="t" style="left:121px;top:102.5px;font-size:10px;line-height:14px;color:#f0f0f0;font-weight:400;">Default</div><svg class="a" style="left:10.5px;top:128.5px;" width="13" height="9" viewBox="0 0 13 9"><path d="M0.5,4.5 C3,0.3 10,0.3 12.5,4.5 C10,8.7 3,8.7 0.5,4.5Z" fill="#d4d4d4"/><circle cx="6.5" cy="4.5" r="2.7" fill="#535353"/><circle cx="6.5" cy="4.5" r="1.4" fill="#d4d4d4"/></svg><svg class="a" style="left:36.5px;top:129.5px;" width="9" height="7" viewBox="0 0 9 7"><path d="M1,1.5 L4.5,5.5 L8,1.5" fill="none" stroke="#e0e0e0" stroke-width="1.5"/></svg><div class="t" style="left:56px;top:127.5px;font-size:10px;line-height:14px;color:#f0f0f0;font-weight:400;">Fill:</div><div class="a" style="left:99px;top:125px;width:17px;height:17px;background:#fff;border:1px solid #fff;box-shadow:inset 0 0 0 1px #333"></div><svg class="a" style="left:10.5px;top:153.5px;" width="13" height="9" viewBox="0 0 13 9"><path d="M0.5,4.5 C3,0.3 10,0.3 12.5,4.5 C10,8.7 3,8.7 0.5,4.5Z" fill="#636363"/><circle cx="6.5" cy="4.5" r="2.7" fill="#535353"/><circle cx="6.5" cy="4.5" r="1.4" fill="#636363"/></svg><div class="t" style="left:79px;top:152.5px;font-size:10px;line-height:13px;height:14px;color:#f0f0f0;letter-spacing:-.2px;border-bottom:1px dotted #c4c4c4">Opacity:</div><div class="t" style="left:121px;top:152.5px;font-size:10px;line-height:14px;color:#f0f0f0;font-weight:400;">Default</div><svg class="a" style="left:10.5px;top:178.5px;" width="13" height="9" viewBox="0 0 13 9"><path d="M0.5,4.5 C3,0.3 10,0.3 12.5,4.5 C10,8.7 3,8.7 0.5,4.5Z" fill="#636363"/><circle cx="6.5" cy="4.5" r="2.7" fill="#535353"/><circle cx="6.5" cy="4.5" r="1.4" fill="#636363"/></svg><div class="t" style="left:56px;top:177.5px;font-size:10px;line-height:13px;height:14px;color:#f0f0f0;letter-spacing:-.2px;border-bottom:1px dotted #c4c4c4">Opacity:</div><div class="t" style="left:98px;top:177.5px;font-size:10px;line-height:14px;color:#f0f0f0;font-weight:400;">Default</div><svg class="a" style="left:12px;top:359px;" width="10" height="10" viewBox="0 0 10 10"><rect x="1" y="1" width="8" height="8" fill="none" stroke="#e8e8e8" stroke-width="1.8"/></svg><svg class="a" style="left:38px;top:359px;" width="10" height="10" viewBox="0 0 10 10"><rect x=".6" y=".6" width="8.8" height="8.8" fill="none" stroke="#e0e0e0" stroke-width="1"/><rect x="2.5" y="2.5" width="5" height="5" fill="#c8c8c8"/></svg><div class="t" style="left:63px;top:356.5px;font-size:12px;line-height:16px;color:#e0e0e0;font-weight:400;font-style:italic;font-family:'Liberation Serif',serif">fx.</div><svg class="a" style="left:148.5px;top:358.5px;" width="11" height="11" viewBox="0 0 11 11"><circle cx="5.5" cy="5.5" r="4.3" fill="none" stroke="#e0e0e0" stroke-width="1.6"/><path d="M2.5,2.5 L8.5,8.5" stroke="#e0e0e0" stroke-width="1.6"/></svg><svg class="a" style="left:176px;top:358.5px;" width="11" height="11" viewBox="0 0 11 11"><rect x=".5" y=".5" width="10" height="10" fill="none" stroke="#666" stroke-width="1"/><path d="M5.5,3V8M3,5.5H8" stroke="#666"/></svg><svg class="a" style="left:201px;top:358.5px;" width="10" height="11" viewBox="0 0 10 11"><path d="M0,2H10M3.5,2V.5H6.5V2" stroke="#666" fill="none"/><rect x="1.5" y="3" width="7" height="8" fill="none" stroke="#666"/><path d="M3.5,4V10M5,4V10M6.5,4V10" stroke="#666" stroke-width=".7"/></svg><div class="a" style="left:0px;top:374px;width:242px;height:1px;background:#3e3e3e;"></div><svg class="a" style="left:110px;top:375px;" width="18" height="4" viewBox="0 0 18 4"><path d="M0.5,0V4M2.5,0V4M4.5,0V4M6.5,0V4M8.5,0V4M10.5,0V4M12.5,0V4M14.5,0V4M16.5,0V4" stroke="#3a3a3a" stroke-width="1"/></svg></div>
<div id="taskbar" class="a"><div class="a" style="left:0px;top:0px;width:1920px;height:40px;background:linear-gradient(90deg,#403b3d 0,#4a4245 40px,#4a4143 130px,#3e3a3b 210px,#383838 300px,#393939 1000px,#343434 1230px,#2f2f2f 1330px,#3c3c3c 1400px,#424242 1460px,#434343 1920px);"></div><div class="a" style="left:538px;top:0px;width:48px;height:40px;background:#c87428;border-bottom:2px solid #f08a30"></div><div class="a" style="left:587px;top:0px;width:48px;height:40px;background:#c47630;border-bottom:2px solid #f08a30"></div><div class="a" style="left:636px;top:0px;width:45px;height:40px;background:#5e5e5e;border-bottom:2px solid #86b0d8"></div><svg class="a" style="left:16px;top:12px;" width="17" height="17" viewBox="0 0 17 17"><path d="M0,2.4 L7,1.4 V8 H0Z M8,1.25 L17,0 V8 H8Z M0,9 H7 V15.6 L0,14.6Z M8,9 H17 V17 L8,15.75Z" fill="#fff"/></svg><svg class="a" style="left:63px;top:11px;" width="18" height="19" viewBox="0 0 18 19"><circle cx="11" cy="7" r="5.5" fill="none" stroke="#fff" stroke-width="1.6"/><path d="M7,11.5 L1,18" stroke="#fff" stroke-width="1.8"/></svg><svg class="a" style="left:111px;top:11px;" width="18" height="18" viewBox="0 0 18 18"><circle cx="9" cy="9" r="7" fill="none" stroke="#fff" stroke-width="2.2"/></svg><svg class="a" style="left:159px;top:12px;" width="18" height="16" viewBox="0 0 18 16"><rect x="1" y="3.5" width="11" height="9" fill="none" stroke="#fff" stroke-width="1.4"/><path d="M1,1H12M1,15H12" stroke="#fff" stroke-width="1.4"/><path d="M15.5,1V3M15.5,5.5V10.5M15.5,13V15" stroke="#fff" stroke-width="2"/></svg><svg class="a" style="left:208px;top:8px;" width="23" height="24" viewBox="0 0 23 24"><path d="M1,11 C2,3 9,0 14,1.5 C20,3 22.5,8 22,14 H8.5 C9,18 13,19.5 16,19 C18,18.7 19.5,18 21,17 V21.5 C18,23.5 13,24 9.5,22.5 C4,20 2.5,14.5 5,10 C6.5,7 9.5,5.5 12,5.5 C10,6.5 8.8,8.5 8.5,10 H15.5 C15.5,6 12,4.5 9,5 C5,5.5 2.5,8 1,11Z" fill="#1e78d2"/></svg><svg class="a" style="left:256px;top:9px;" width="25" height="21" viewBox="0 0 25 21"><path d="M1,2 H9 L11,4 H24 V8 H1Z" fill="#e8a820"/><rect x="1" y="5" width="23" height="15" fill="#f8d860"/><path d="M7,20 V13 H18 V20 H15 V16 H10 V20Z" fill="#3a8ad8"/><rect x="1" y="10" width="23" height="3" fill="#f0c040"/></svg><svg class="a" style="left:305px;top:7px;" width="25" height="25" viewBox="0 0 25 25"><circle cx="12.5" cy="12.5" r="12" fill="#fff"/><path d="M6.5,8.5 V14 C6.5,16.5 9,17 12.5,17 C16,17 18.5,16.5 18.5,14 V8.5 M12.5,9.5V17" fill="none" stroke="#2aa8b8" stroke-width="1.8"/></svg><svg class="a" style="left:354px;top:8px;" width="24" height="24" viewBox="0 0 24 24"><circle cx="12" cy="12" r="11.5" fill="#e8e8e8"/><path d="M12,12 L2.04,6.25 A11.5,11.5 0 0 1 21.96,6.25 Z" fill="#e04a3a"/><path d="M12,12 L21.96,6.25 A11.5,11.5 0 0 1 12,23.5 Z" fill="#f8c828"/><path d="M12,12 L12,23.5 A11.5,11.5 0 0 1 2.04,6.25 Z" fill="#38a858"/><circle cx="12" cy="12" r="5.3" fill="#f4f4f4"/><circle cx="12" cy="12" r="4.2" fill="#4a88e8"/></svg><svg class="a" style="left:402px;top:9px;" width="25" height="22" viewBox="0 0 25 22"><rect x="7" y="0" width="18" height="22" rx="1.5" fill="#2b7cd3"/><rect x="7" y="0" width="18" height="6" fill="#41a5ee"/><rect x="7" y="11" width="18" height="5.5" fill="#185abd"/><rect x="7" y="16.5" width="18" height="5.5" fill="#103f91"/><rect x="0" y="4.5" width="13" height="13" rx="1.2" fill="#185abd"/><path d="M2.5,7.5 L4.5,14.5 L6.5,9.5 L8.5,14.5 L10.5,7.5" fill="none" stroke="#fff" stroke-width="1.5"/></svg><svg class="a" style="left:451px;top:8px;" width="26" height="24" viewBox="0 0 26 24"><rect x="5" y="2" width="19" height="14" rx="1" fill="#d8e4ec" stroke="#a0a8b0"/><rect x="2" y="5" width="13" height="12" fill="#e8e8e8" stroke="#b0b0b0"/><path d="M9,10 L12,13 L16,8 L20,13" stroke="#5aa0d0" stroke-width="1.2" fill="none"/><ellipse cx="14" cy="20" rx="7" ry="2.5" fill="#c8c8c8"/><rect x="12" y="16" width="4" height="4" fill="#b0b0b0"/></svg><svg class="a" style="left:500px;top:8px;" width="25" height="25" viewBox="0 0 25 25"><rect width="25" height="25" fill="#e8f4f4"/><path d="M3,20 V4 H7 L12.5,14 L18,4 H22 V20 H18 V11 L13.5,19 H11.5 L7,11 V20Z" fill="#2aa8a0"/><path d="M3,20 V4 H7 V20Z" fill="#188880"/><rect x="12" y="20.5" width="10" height="3" fill="#188880"/></svg><svg class="a" style="left:549px;top:8px;" width="26" height="24" viewBox="0 0 26 24"><rect x="8" y="2" width="18" height="19" rx="1.5" fill="#1a74d0"/><rect x="15" y="3" width="10" height="6" fill="#3ca0f0"/><rect x="15" y="9" width="10" height="6" fill="#1464b8"/><path d="M8,13 L17,19 L26,13 V20 C26,21 25.5,21.5 24.5,21.5 H9.5 C8.5,21.5 8,21 8,20Z" fill="#2a8ae0"/><rect x="0" y="5" width="14" height="14" rx="1.3" fill="#0a5cbc"/><circle cx="7" cy="12" r="3.5" fill="none" stroke="#fff" stroke-width="1.8"/></svg><svg class="a" style="left:599px;top:9px;" width="23" height="22" viewBox="0 0 23 22"><rect x=".7" y=".7" width="21.6" height="20.6" fill="none" stroke="#fff" stroke-width="1.4"/><path d="M1,17 L8,7 L12,12.5 L15,9 L22,17 V21 H1Z" fill="#fff"/></svg><svg class="a" style="left:646px;top:7px;" width="26" height="26" viewBox="0 0 26 26"><circle cx="13" cy="13" r="11.5" fill="none" stroke="#58a0d8" stroke-width="1.8"/><circle cx="13" cy="13" r="4.2" fill="#68b0f0"/></svg><div class="a" style="left:699px;top:9px;width:21px;height:21px;background:#300800;border-radius:4px"></div><div class="t" style="left:702.5px;top:12.5px;font-size:11px;line-height:15px;color:#ff9a00;font-weight:700;letter-spacing:-.3px">Ai</div><div class="a" style="left:248px;top:38px;width:40px;height:2px;background:#86b0d8;"></div><div class="a" style="left:297px;top:38px;width:39px;height:2px;background:#86b0d8;"></div><div class="a" style="left:345px;top:38px;width:40px;height:2px;background:#86b0d8;"></div><div class="a" style="left:394px;top:38px;width:39px;height:2px;background:#86b0d8;"></div><div class="a" style="left:443px;top:38px;width:39px;height:2px;background:#86b0d8;"></div><div class="a" style="left:492px;top:38px;width:39px;height:2px;background:#86b0d8;"></div><div class="a" style="left:688px;top:38px;width:40px;height:2px;background:#86b0d8;"></div><svg class="a" style="left:1830px;top:11px;" width="17" height="19" viewBox="0 0 17 19"><path d="M12,1 C14,0 15.5,2 14.5,4 L8,15 L5.5,16.5 L6,13.5 Z" fill="none" stroke="#fff" stroke-width="1.3"/><path d="M2,13 C0,16 3,18 6,15 M9,12 C12,9 17,11 14,14" fill="none" stroke="#fff" stroke-width="1.2"/></svg><div class="t" style="right:9px;top:4px;font-size:11px;line-height:15px;color:#fff;font-weight:400;">12:50 PM</div><div class="t" style="right:5px;top:22px;font-size:11px;line-height:15px;color:#fff;font-weight:400;">10/19/2021</div></div>
</body></html>
